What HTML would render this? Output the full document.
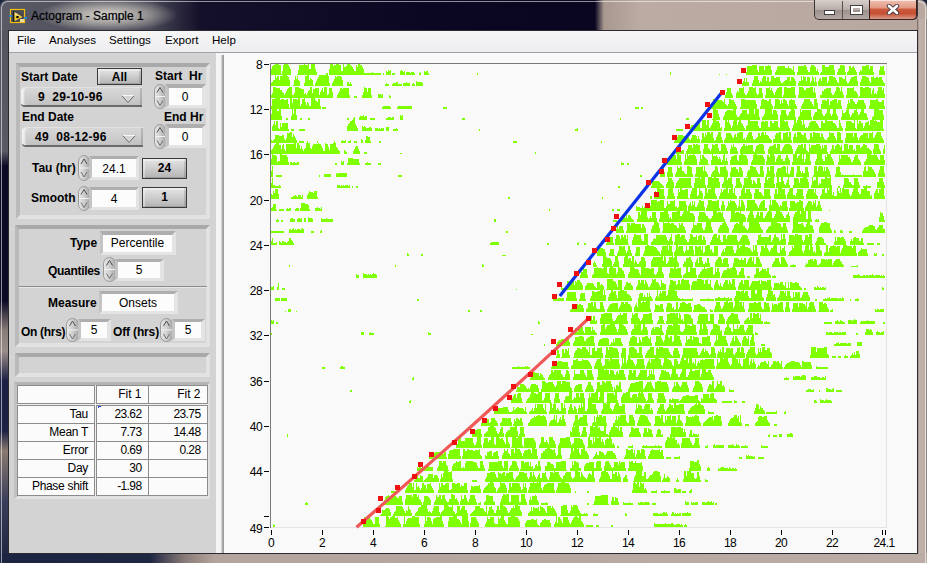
<!DOCTYPE html><html><head><meta charset="utf-8"><style>
*{margin:0;padding:0}
html,body{width:927px;height:563px;overflow:hidden;background:#1b2440}
body{position:relative;font-family:"Liberation Sans",sans-serif}
.t{position:absolute;white-space:pre;line-height:1;}
</style></head><body>
<div style="position:absolute;left:0px;top:0px;width:927px;height:563px;background:#1b2440;border-radius:7px 7px 0 0;"></div>
<div style="position:absolute;left:0px;top:0px;width:927px;height:31px;border-radius:7px 7px 0 0;background:linear-gradient(90deg,#5a5a66 0px,#4a4a58 150px,#14102a 200px,#0b0722 430px,#0a0620 595px,#a89890 604px,#bcaba3 640px,#b8a8a0 927px);"></div>
<div style="position:absolute;left:20px;top:0px;width:160px;height:31px;background:radial-gradient(ellipse 70px 17px at 88px 15px,rgba(235,230,220,0.92),rgba(210,205,195,0.55) 55%,rgba(120,118,125,0) 100%);"></div>
<div style="position:absolute;left:0px;top:31px;width:9px;height:532px;background:linear-gradient(180deg,#55555f 0px,#5a5a66 120px,#0c0a26 135px,#0c0a26 270px,#8a7c78 300px,#9a8c88 320px,#1c1f45 350px,#1c2145 400px,#8a7a70 420px,#3a3d5a 470px,#1b2440 532px);"></div>
<div style="position:absolute;left:917px;top:19px;width:10px;height:544px;background:linear-gradient(90deg,#6a5e5a 0px,#c2b2ac 2px,#bcaca6 8px,#e0d8d4 9px,#3a3030 10px);"></div>
<div style="position:absolute;left:0px;top:553px;width:927px;height:10px;background:linear-gradient(90deg,#1b2440 0px,#1e2642 150px,#8a7c78 185px,#b4a49e 215px,#bcaca6 927px);"></div>
<div style="position:absolute;left:1px;top:1px;width:925px;height:562px;border:1px solid rgba(255,255,255,0.55);border-bottom:none;border-radius:7px 7px 0 0;box-sizing:border-box;"></div>
<svg style="position:absolute;left:9px;top:8px" width="18" height="17" viewBox="0 0 18 17"><rect x="1.5" y="1.5" width="14" height="13" fill="#4a4850" stroke="#f2c010" stroke-width="1.2"/><rect x="4" y="3" width="1.2" height="11" fill="#202020"/><path d="M5.5 4 L13.5 9 L5.5 13 Z" fill="#f4cc30"/><path d="M6 5 L11 8 L6 7 Z" fill="#fff0b0"/><circle cx="8.5" cy="9" r="1.3" fill="#000"/><rect x="11" y="11" width="4" height="3" fill="#e8dca0"/><rect x="0" y="7" width="3" height="2" fill="#3080d0"/><rect x="15" y="9" width="3" height="2" fill="#3080d0"/></svg>
<div class="t" style="left:31px;top:9.5px;font-size:12px;font-weight:normal;color:#000;text-shadow:0 0 1px rgba(0,0,40,0.5);">Actogram - Sample 1</div>
<div style="position:absolute;left:814px;top:0px;width:104px;height:20px;border:1px solid #3a3434;border-top:none;border-radius:0 0 5px 5px;box-sizing:border-box;background:linear-gradient(180deg,#d8d0cc 0%,#b8aca8 50%,#9c908c 51%,#b4a8a4 100%);"></div>
<div style="position:absolute;left:869px;top:0px;width:48px;height:20px;border:1px solid #3a2020;border-top:none;border-radius:0 0 5px 0;box-sizing:border-box;background:linear-gradient(180deg,#f0c0b0 0%,#e49a86 40%,#cc5a3e 50%,#c44e32 70%,#dc9a88 100%);box-shadow:inset 0 1px 0 rgba(255,255,255,0.6);"></div>
<div style="position:absolute;left:842px;top:1px;width:1px;height:18px;background:#5a5050;"></div>
<div style="position:absolute;left:824px;top:10px;width:11px;height:5px;background:#fff;border:1px solid #404040;box-sizing:border-box;"></div>
<div style="position:absolute;left:851px;top:6px;width:11px;height:8px;border:2px solid #fff;outline:1px solid #404040;box-sizing:border-box;"></div>
<svg style="position:absolute;left:886px;top:4px" width="14" height="11" viewBox="0 0 14 11"><path d="M3 2 L11 9 M11 2 L3 9" stroke="#4a4048" stroke-width="4.4" stroke-linecap="round"/><path d="M3 2 L11 9 M11 2 L3 9" stroke="#fff" stroke-width="2.6" stroke-linecap="round"/></svg>
<div style="position:absolute;left:8px;top:30px;width:910px;height:524px;background:#f0f0f0;border:1px solid #2a2a30;box-sizing:border-box;"></div>
<div style="position:absolute;left:9px;top:31px;width:908px;height:21px;background:linear-gradient(180deg,#f6f6f6,#eeeef2);"></div>
<div style="position:absolute;left:9px;top:52px;width:908px;height:1px;background:#a0a0a8;"></div>
<div class="t" style="left:17px;top:34px;font-size:11.6px;font-weight:normal;color:#000;">File</div>
<div class="t" style="left:49px;top:34px;font-size:11.6px;font-weight:normal;color:#000;">Analyses</div>
<div class="t" style="left:109px;top:34px;font-size:11.6px;font-weight:normal;color:#000;">Settings</div>
<div class="t" style="left:165px;top:34px;font-size:11.6px;font-weight:normal;color:#000;">Export</div>
<div class="t" style="left:212px;top:34px;font-size:11.6px;font-weight:normal;color:#000;">Help</div>
<div style="position:absolute;left:9px;top:53px;width:207px;height:500px;background:#d3d3d3;"></div>
<div style="position:absolute;left:216px;top:53px;width:701px;height:500px;background:#f4f4f4;"></div>
<div style="position:absolute;left:221px;top:55px;width:3px;height:498px;background:linear-gradient(90deg,#e0e0e0,#a8a8a8 60%,#909090);"></div>
<div style="position:absolute;left:224px;top:53px;width:693px;height:500px;background:#f9f9f9;"></div>
<div style="position:absolute;left:16px;top:63px;width:194px;height:156px;box-sizing:border-box;border-style:solid;border-width:4px 4px 4px 4px;border-color:#a9a9a9 #e2e2e2 #e2e2e2 #bababa;background:#d3d3d3;"></div>
<div class="t" style="left:21px;top:71px;font-size:12px;font-weight:bold;color:#000;">Start Date</div>
<div style="position:absolute;left:97px;top:68px;width:45px;height:17px;box-sizing:border-box;border:1px solid #3a3a3a;background:linear-gradient(180deg,#e4e4e4 0%,#d2d2d2 40%,#c0c0c0 75%,#b2b2b2 100%);box-shadow:inset 2px 2px 0 rgba(255,255,255,0.35),inset -2px -1px 0 rgba(0,0,0,0.12);"></div><div class="t" style="left:19.5px;width:200px;top:71px;font-size:12px;font-weight:bold;color:#000;text-align:center;">All</div>
<div style="position:absolute;left:21px;top:87px;width:121px;height:20px;box-sizing:border-box;border-bottom:2px solid #6a6a6a;border-top:1px solid #e2e2e2;border-radius:4px 0 0 4px;background:linear-gradient(180deg,#d8d8d8 0%,#cccccc 60%,#c2c2c2 100%);box-shadow:inset 4px 0 2px -1px rgba(255,255,255,0.7),inset -2px 0 1px rgba(0,0,0,0.15);"></div><div class="t" style="left:38px;top:91px;font-size:12px;font-weight:bold;color:#000;letter-spacing:0.3px;">9  29-10-96</div><svg style="position:absolute;left:120px;top:94px" width="16" height="10" viewBox="0 0 16 10"><path d="M1.5 1.5 L14.5 1.5 L8 8.5 Z" fill="#d6d6d6" stroke="#6a6a6a" stroke-width="1"/><path d="M1.5 1.5 L14.5 1.5" stroke="#f6f6f6" stroke-width="1"/></svg>
<div class="t" style="left:155px;top:70px;font-size:12px;font-weight:bold;color:#000;">Start  Hr</div>
<svg style="position:absolute;left:154px;top:84px" width="12" height="25" viewBox="0 0 12 25"><defs><linearGradient id="sg" x1="0" y1="0" x2="1" y2="0"><stop offset="0" stop-color="#e8e8e8"/><stop offset="0.5" stop-color="#cfcfcf"/><stop offset="1" stop-color="#a8a8a8"/></linearGradient></defs><rect x="0.5" y="0.5" width="11" height="24" rx="5.5" ry="6.25" fill="url(#sg)" stroke="#9a9a9a" stroke-width="1"/><line x1="1" y1="12.5" x2="11" y2="12.5" stroke="#f4f4f4" stroke-width="1"/><path d="M3.0 8.5 L6.0 3.5 L9.0 8.5" fill="none" stroke="#505050" stroke-width="1"/><path d="M3.0 16.5 L6.0 21.5 L9.0 16.5" fill="none" stroke="#707070" stroke-width="1"/></svg>
<div style="position:absolute;left:165px;top:84px;width:41px;height:24px;box-sizing:border-box;border-style:solid;border-width:4px 4px 3px 4px;border-color:#aeaeae #e4e4e4 #e4e4e4 #c4c4c4;background:#fcfcfc;"></div>
<div class="t" style="left:85px;width:200px;top:91px;font-size:12px;font-weight:normal;color:#000;text-align:center;">0</div>
<div class="t" style="left:22px;top:111px;font-size:12px;font-weight:bold;color:#000;">End Date</div>
<div style="position:absolute;left:22px;top:127px;width:121px;height:20px;box-sizing:border-box;border-bottom:2px solid #6a6a6a;border-top:1px solid #e2e2e2;border-radius:4px 0 0 4px;background:linear-gradient(180deg,#d8d8d8 0%,#cccccc 60%,#c2c2c2 100%);box-shadow:inset 4px 0 2px -1px rgba(255,255,255,0.7),inset -2px 0 1px rgba(0,0,0,0.15);"></div><div class="t" style="left:35px;top:131px;font-size:12px;font-weight:bold;color:#000;letter-spacing:0.3px;">49  08-12-96</div><svg style="position:absolute;left:121px;top:134px" width="16" height="10" viewBox="0 0 16 10"><path d="M1.5 1.5 L14.5 1.5 L8 8.5 Z" fill="#d6d6d6" stroke="#6a6a6a" stroke-width="1"/><path d="M1.5 1.5 L14.5 1.5" stroke="#f6f6f6" stroke-width="1"/></svg>
<div class="t" style="left:164px;top:111px;font-size:12px;font-weight:bold;color:#000;">End Hr</div>
<svg style="position:absolute;left:154px;top:124px" width="12" height="25" viewBox="0 0 12 25"><defs><linearGradient id="sg" x1="0" y1="0" x2="1" y2="0"><stop offset="0" stop-color="#e8e8e8"/><stop offset="0.5" stop-color="#cfcfcf"/><stop offset="1" stop-color="#a8a8a8"/></linearGradient></defs><rect x="0.5" y="0.5" width="11" height="24" rx="5.5" ry="6.25" fill="url(#sg)" stroke="#9a9a9a" stroke-width="1"/><line x1="1" y1="12.5" x2="11" y2="12.5" stroke="#f4f4f4" stroke-width="1"/><path d="M3.0 8.5 L6.0 3.5 L9.0 8.5" fill="none" stroke="#505050" stroke-width="1"/><path d="M3.0 16.5 L6.0 21.5 L9.0 16.5" fill="none" stroke="#707070" stroke-width="1"/></svg>
<div style="position:absolute;left:165px;top:124px;width:41px;height:24px;box-sizing:border-box;border-style:solid;border-width:4px 4px 3px 4px;border-color:#aeaeae #e4e4e4 #e4e4e4 #c4c4c4;background:#fcfcfc;"></div>
<div class="t" style="left:85px;width:200px;top:131px;font-size:12px;font-weight:normal;color:#000;text-align:center;">0</div>
<div class="t" style="left:32px;top:162px;font-size:12px;font-weight:bold;color:#000;">Tau (hr)</div>
<svg style="position:absolute;left:78px;top:155px" width="12" height="26" viewBox="0 0 12 26"><defs><linearGradient id="sg" x1="0" y1="0" x2="1" y2="0"><stop offset="0" stop-color="#e8e8e8"/><stop offset="0.5" stop-color="#cfcfcf"/><stop offset="1" stop-color="#a8a8a8"/></linearGradient></defs><rect x="0.5" y="0.5" width="11" height="25" rx="5.5" ry="6.5" fill="url(#sg)" stroke="#9a9a9a" stroke-width="1"/><line x1="1" y1="13.0" x2="11" y2="13.0" stroke="#f4f4f4" stroke-width="1"/><path d="M3.0 9.0 L6.0 4.0 L9.0 9.0" fill="none" stroke="#505050" stroke-width="1"/><path d="M3.0 17.0 L6.0 22.0 L9.0 17.0" fill="none" stroke="#707070" stroke-width="1"/></svg>
<div style="position:absolute;left:89px;top:156px;width:50px;height:24px;box-sizing:border-box;border-style:solid;border-width:3px 3px 3px 3px;border-color:#aeaeae #e4e4e4 #e4e4e4 #c4c4c4;background:#fcfcfc;"></div>
<div class="t" style="left:14px;width:200px;top:163px;font-size:12px;font-weight:normal;color:#000;text-align:center;">24.1</div>
<div style="position:absolute;left:142px;top:158px;width:45px;height:21px;box-sizing:border-box;border:1px solid #3a3a3a;background:linear-gradient(180deg,#e4e4e4 0%,#d2d2d2 40%,#c0c0c0 75%,#b2b2b2 100%);box-shadow:inset 2px 2px 0 rgba(255,255,255,0.35),inset -2px -1px 0 rgba(0,0,0,0.12);"></div><div class="t" style="left:64.5px;width:200px;top:162px;font-size:12px;font-weight:bold;color:#000;text-align:center;">24</div>
<div class="t" style="left:31px;top:192px;font-size:12px;font-weight:bold;color:#000;">Smooth</div>
<svg style="position:absolute;left:78px;top:186px" width="12" height="25" viewBox="0 0 12 25"><defs><linearGradient id="sg" x1="0" y1="0" x2="1" y2="0"><stop offset="0" stop-color="#e8e8e8"/><stop offset="0.5" stop-color="#cfcfcf"/><stop offset="1" stop-color="#a8a8a8"/></linearGradient></defs><rect x="0.5" y="0.5" width="11" height="24" rx="5.5" ry="6.25" fill="url(#sg)" stroke="#9a9a9a" stroke-width="1"/><line x1="1" y1="12.5" x2="11" y2="12.5" stroke="#f4f4f4" stroke-width="1"/><path d="M3.0 8.5 L6.0 3.5 L9.0 8.5" fill="none" stroke="#505050" stroke-width="1"/><path d="M3.0 16.5 L6.0 21.5 L9.0 16.5" fill="none" stroke="#707070" stroke-width="1"/></svg>
<div style="position:absolute;left:89px;top:187px;width:50px;height:23px;box-sizing:border-box;border-style:solid;border-width:3px 3px 3px 3px;border-color:#aeaeae #e4e4e4 #e4e4e4 #c4c4c4;background:#fcfcfc;"></div>
<div class="t" style="left:14px;width:200px;top:193px;font-size:12px;font-weight:normal;color:#000;text-align:center;">4</div>
<div style="position:absolute;left:142px;top:187px;width:45px;height:21px;box-sizing:border-box;border:1px solid #3a3a3a;background:linear-gradient(180deg,#e4e4e4 0%,#d2d2d2 40%,#c0c0c0 75%,#b2b2b2 100%);box-shadow:inset 2px 2px 0 rgba(255,255,255,0.35),inset -2px -1px 0 rgba(0,0,0,0.12);"></div><div class="t" style="left:64.5px;width:200px;top:191px;font-size:12px;font-weight:bold;color:#000;text-align:center;">1</div>
<div style="position:absolute;left:15px;top:225px;width:195px;height:122px;box-sizing:border-box;border-style:solid;border-width:4px 4px 4px 4px;border-color:#a9a9a9 #e2e2e2 #e2e2e2 #bababa;background:#d3d3d3;"></div>
<div class="t" style="left:70px;top:237px;font-size:12px;font-weight:bold;color:#000;">Type</div>
<div style="position:absolute;left:100px;top:231px;width:76px;height:24px;box-sizing:border-box;border-style:solid;border-width:4px 4px 3px 3px;border-color:#aeaeae #e4e4e4 #e4e4e4 #c4c4c4;background:#fcfcfc;"></div>
<div class="t" style="left:37.5px;width:200px;top:237px;font-size:12px;font-weight:normal;color:#000;text-align:center;">Percentile</div>
<div class="t" style="left:48px;top:265px;font-size:12px;font-weight:bold;color:#000;letter-spacing:-0.3px;">Quantiles</div>
<svg style="position:absolute;left:103px;top:257px" width="13" height="25" viewBox="0 0 13 25"><defs><linearGradient id="sg" x1="0" y1="0" x2="1" y2="0"><stop offset="0" stop-color="#e8e8e8"/><stop offset="0.5" stop-color="#cfcfcf"/><stop offset="1" stop-color="#a8a8a8"/></linearGradient></defs><rect x="0.5" y="0.5" width="12" height="24" rx="6.0" ry="6.25" fill="url(#sg)" stroke="#9a9a9a" stroke-width="1"/><line x1="1" y1="12.5" x2="12" y2="12.5" stroke="#f4f4f4" stroke-width="1"/><path d="M3.5 8.5 L6.5 3.5 L9.5 8.5" fill="none" stroke="#505050" stroke-width="1"/><path d="M3.5 16.5 L6.5 21.5 L9.5 16.5" fill="none" stroke="#707070" stroke-width="1"/></svg>
<div style="position:absolute;left:115px;top:259px;width:49px;height:22px;box-sizing:border-box;border-style:solid;border-width:3px 4px 3px 3px;border-color:#aeaeae #e4e4e4 #e4e4e4 #c4c4c4;background:#fcfcfc;"></div>
<div class="t" style="left:39px;width:200px;top:264px;font-size:12px;font-weight:normal;color:#000;text-align:center;">5</div>
<div style="position:absolute;left:19px;top:286px;width:188px;height:1px;background:#8a8a8a;"></div>
<div style="position:absolute;left:19px;top:287px;width:188px;height:1px;background:#e8e8e8;"></div>
<div class="t" style="left:48px;top:297px;font-size:12px;font-weight:bold;color:#000;">Measure</div>
<div style="position:absolute;left:99px;top:291px;width:79px;height:23px;box-sizing:border-box;border-style:solid;border-width:3px 4px 3px 3px;border-color:#aeaeae #e4e4e4 #e4e4e4 #c4c4c4;background:#fcfcfc;"></div>
<div class="t" style="left:38px;width:200px;top:297px;font-size:12px;font-weight:normal;color:#000;text-align:center;">Onsets</div>
<div class="t" style="left:21px;top:326px;font-size:12px;font-weight:bold;color:#000;letter-spacing:-0.3px;">On (hrs)</div>
<svg style="position:absolute;left:66px;top:318px" width="13" height="24" viewBox="0 0 13 24"><defs><linearGradient id="sg" x1="0" y1="0" x2="1" y2="0"><stop offset="0" stop-color="#e8e8e8"/><stop offset="0.5" stop-color="#cfcfcf"/><stop offset="1" stop-color="#a8a8a8"/></linearGradient></defs><rect x="0.5" y="0.5" width="12" height="23" rx="6.0" ry="6.0" fill="url(#sg)" stroke="#9a9a9a" stroke-width="1"/><line x1="1" y1="12.0" x2="12" y2="12.0" stroke="#f4f4f4" stroke-width="1"/><path d="M3.5 8.0 L6.5 3.0 L9.5 8.0" fill="none" stroke="#505050" stroke-width="1"/><path d="M3.5 16.0 L6.5 21.0 L9.5 16.0" fill="none" stroke="#707070" stroke-width="1"/></svg>
<div style="position:absolute;left:78px;top:319px;width:33px;height:22px;box-sizing:border-box;border-style:solid;border-width:3px 4px 3px 3px;border-color:#aeaeae #e4e4e4 #e4e4e4 #c4c4c4;background:#fcfcfc;"></div>
<div class="t" style="left:-6px;width:200px;top:324px;font-size:12px;font-weight:normal;color:#000;text-align:center;">5</div>
<div class="t" style="left:113px;top:326px;font-size:12px;font-weight:bold;color:#000;letter-spacing:-0.15px;">Off (hrs)</div>
<svg style="position:absolute;left:160px;top:318px" width="13" height="24" viewBox="0 0 13 24"><defs><linearGradient id="sg" x1="0" y1="0" x2="1" y2="0"><stop offset="0" stop-color="#e8e8e8"/><stop offset="0.5" stop-color="#cfcfcf"/><stop offset="1" stop-color="#a8a8a8"/></linearGradient></defs><rect x="0.5" y="0.5" width="12" height="23" rx="6.0" ry="6.0" fill="url(#sg)" stroke="#9a9a9a" stroke-width="1"/><line x1="1" y1="12.0" x2="12" y2="12.0" stroke="#f4f4f4" stroke-width="1"/><path d="M3.5 8.0 L6.5 3.0 L9.5 8.0" fill="none" stroke="#505050" stroke-width="1"/><path d="M3.5 16.0 L6.5 21.0 L9.5 16.0" fill="none" stroke="#707070" stroke-width="1"/></svg>
<div style="position:absolute;left:172px;top:319px;width:33px;height:22px;box-sizing:border-box;border-style:solid;border-width:3px 4px 3px 3px;border-color:#aeaeae #e4e4e4 #e4e4e4 #c4c4c4;background:#fcfcfc;"></div>
<div class="t" style="left:88px;width:200px;top:324px;font-size:12px;font-weight:normal;color:#000;text-align:center;">5</div>
<div style="position:absolute;left:15px;top:353px;width:195px;height:24px;box-sizing:border-box;border-style:solid;border-width:4px 4px 4px 4px;border-color:#a9a9a9 #e2e2e2 #e2e2e2 #bababa;background:#d3d3d3;"></div>
<div style="position:absolute;left:14px;top:382px;width:196px;height:117px;box-sizing:border-box;border-style:solid;border-width:4px 3px 3px 4px;border-color:#b4b4b4 #e2e2e2 #e2e2e2 #c2c2c2;background:#d3d3d3;"></div>
<svg style="position:absolute;left:0;top:0" width="927" height="563" viewBox="0 0 927 563" shape-rendering="crispEdges">
<rect x="17" y="385" width="191" height="111" fill="#8c8c8c"/>
<rect x="18" y="386" width="76" height="17" fill="#fbfbfb"/>
<rect x="18" y="406" width="76" height="17" fill="#fbfbfb"/>
<rect x="18" y="424" width="76" height="17" fill="#fbfbfb"/>
<rect x="18" y="442" width="76" height="17" fill="#fbfbfb"/>
<rect x="18" y="460" width="76" height="17" fill="#fbfbfb"/>
<rect x="18" y="478" width="76" height="17" fill="#fbfbfb"/>
<rect x="97" y="386" width="51" height="17" fill="#fbfbfb"/>
<rect x="97" y="406" width="51" height="17" fill="#fbfbfb"/>
<rect x="97" y="424" width="51" height="17" fill="#fbfbfb"/>
<rect x="97" y="442" width="51" height="17" fill="#fbfbfb"/>
<rect x="97" y="460" width="51" height="17" fill="#fbfbfb"/>
<rect x="97" y="478" width="51" height="17" fill="#fbfbfb"/>
<rect x="149" y="386" width="58" height="17" fill="#fbfbfb"/>
<rect x="149" y="406" width="58" height="17" fill="#fbfbfb"/>
<rect x="149" y="424" width="58" height="17" fill="#fbfbfb"/>
<rect x="149" y="442" width="58" height="17" fill="#fbfbfb"/>
<rect x="149" y="460" width="58" height="17" fill="#fbfbfb"/>
<rect x="149" y="478" width="58" height="17" fill="#fbfbfb"/>
<rect x="94" y="385" width="3" height="111" fill="#8c8c8c"/><rect x="95" y="385" width="1" height="111" fill="#f0f0f0"/>
<rect x="17" y="404" width="191" height="1" fill="#f0f0f0"/>
<path d="M98 408 V406 H101" stroke="#2040e0" stroke-width="1" fill="none"/>
</svg>
<div class="t" style="right:785.5px;top:388px;font-size:12px;font-weight:normal;color:#000;text-align:right;">Fit 1</div>
<div class="t" style="right:726.5px;top:388px;font-size:12px;font-weight:normal;color:#000;text-align:right;">Fit 2</div>
<div class="t" style="right:839px;top:408px;font-size:12px;font-weight:normal;color:#000;text-align:right;letter-spacing:-0.3px;">Tau</div>
<div class="t" style="right:785.5px;top:408px;font-size:12px;font-weight:normal;color:#000;text-align:right;letter-spacing:-0.6px;">23.62</div>
<div class="t" style="right:726.5px;top:408px;font-size:12px;font-weight:normal;color:#000;text-align:right;letter-spacing:-0.6px;">23.75</div>
<div class="t" style="right:839px;top:426px;font-size:12px;font-weight:normal;color:#000;text-align:right;letter-spacing:-0.3px;">Mean T</div>
<div class="t" style="right:785.5px;top:426px;font-size:12px;font-weight:normal;color:#000;text-align:right;letter-spacing:-0.6px;">7.73</div>
<div class="t" style="right:726.5px;top:426px;font-size:12px;font-weight:normal;color:#000;text-align:right;letter-spacing:-0.6px;">14.48</div>
<div class="t" style="right:839px;top:444px;font-size:12px;font-weight:normal;color:#000;text-align:right;letter-spacing:-0.3px;">Error</div>
<div class="t" style="right:785.5px;top:444px;font-size:12px;font-weight:normal;color:#000;text-align:right;letter-spacing:-0.6px;">0.69</div>
<div class="t" style="right:726.5px;top:444px;font-size:12px;font-weight:normal;color:#000;text-align:right;letter-spacing:-0.6px;">0.28</div>
<div class="t" style="right:839px;top:462px;font-size:12px;font-weight:normal;color:#000;text-align:right;letter-spacing:-0.3px;">Day</div>
<div class="t" style="right:785.5px;top:462px;font-size:12px;font-weight:normal;color:#000;text-align:right;letter-spacing:-0.6px;">30</div>
<div class="t" style="right:839px;top:480px;font-size:12px;font-weight:normal;color:#000;text-align:right;letter-spacing:-0.3px;">Phase shift</div>
<div class="t" style="right:785.5px;top:480px;font-size:12px;font-weight:normal;color:#000;text-align:right;letter-spacing:-0.6px;">-1.98</div>
<svg style="position:absolute;left:0;top:0" width="927" height="563" viewBox="0 0 927 563" shape-rendering="crispEdges">
<rect x="270.5" y="63.5" width="616" height="464" fill="none" stroke="#e4e4e4" stroke-width="1"/>
<path d="M270.5 63 V528 M270 63.5 H887" stroke="#7a7a7a" stroke-width="1" fill="none"/>
<path d="M271 75V69H272V66H273V65H275V64H279V65H281V74H282V71H283V65H284V64H288V65H289V67H290V69H291V75ZM297 75V74H298V70H299V65H304V64H305V65H308V64H309V69H311V64H315V69H316V72H317V75ZM326 75V73H328V75ZM329 75V69H330V64H333V66H334V65H336V64H339V65H341V71H343V64H344V67H346V66H347V64H350V65H351V66H352V67H353V69H354V71H356V65H357V67H358V64H360V65H362V67H363V69H364V73H372V72H373V73H381V75ZM383 75V73H384V75ZM386 75V71H387V72H388V70H389V71H390V70H391V75ZM392 75V73H395V75ZM400 75V71H401V70H402V71H403V72H404V71H405V75ZM406 75V72H410V73H411V72H414V73H415V75ZM419 75V73H420V72H421V75ZM424 75V71H425V72H426V71H428V73H429V75ZM477 75V73H478V75ZM670 75V72H671V75ZM719 75V74H720V75ZM726 75V74H727V75ZM746 75V72H747V66H752V65H757V70H758V72H759V66H764V70H765V66H768V65H769V66H771V70H772V75ZM775 75V72H776V70H777V67H778V66H785V68H788V66H789V68H791V69H792V70H793V66H794V72H795V75ZM797 75V72H798V66H804V65H806V67H807V70H808V72H810V67H811V65H814V66H815V67H816V71H817V69H818V72H819V75ZM820 75V73H821V72H822V65H825V67H829V65H834V70H835V75ZM837 75V72H838V69H839V68H840V65H844V66H845V72H846V75ZM847 75V72H848V71H849V66H851V68H852V67H853V66H854V68H855V70H856V72H857V75ZM859 75V72H860V70H861V71H862V66H866V65H869V69H870V66H873V72H874V75ZM879 75V70H880V66H881V67H882V66H884V71H885V75ZM271 86V83H272V82H273V80H275V75H276V78H277V76H279V80H280V76H283V75H287V76H288V77H289V80H290V86ZM293 86V85H294V80H295V76H296V79H297V76H298V80H299V81H300V86ZM304 86V83H305V76H307V75H309V80H310V78H311V79H312V80H313V85H314V86ZM315 86V83H316V81H317V79H318V77H319V75H328V76H329V83H330V86ZM332 86V83H333V81H334V79H335V76H336V77H337V76H341V77H342V80H343V86ZM347 86V82H349V84H350V82H351V84H352V86ZM385 86V84H386V83H387V84H389V86ZM392 86V84H393V83H396V82H398V84H402V86ZM403 86V83H406V82H407V83H410V86ZM412 86V84H413V83H414V84H415V86ZM416 86V81H417V82H422V83H423V86ZM742 86V83H743V81H744V78H745V82H746V78H747V82H749V86ZM752 86V83H753V80H754V76H758V80H759V83H760V81H761V82H762V78H763V76H766V81H767V77H769V82H770V81H771V76H774V78H776V77H780V81H781V83H783V82H784V81H785V80H787V77H790V81H791V77H794V79H795V81H796V86ZM798 86V83H799V81H801V76H802V80H803V76H804V77H806V81H807V77H810V83H811V81H812V76H813V78H814V82H815V77H816V82H817V86ZM818 86V81H819V79H820V78H821V81H822V77H827V83H828V81H829V76H833V77H835V78H836V80H837V82H838V83H839V77H842V78H843V79H845V76H846V81H847V83H849V81H850V79H851V77H854V76H857V81H858V86ZM860 86V82H861V79H862V76H866V77H868V78H869V81H870V83H871V77H873V76H874V78H876V77H878V78H879V77H882V80H883V82H884V83H885V86ZM271 98V95H272V93H273V87H276V88H280V90H282V92H283V93H284V95H285V93H286V91H287V89H288V88H289V87H292V95H294V93H295V87H299V88H301V89H304V94H305V93H306V95H307V93H308V91H309V90H310V87H312V93H313V89H315V88H319V95H320V92H321V90H322V88H323V92H324V87H327V95H328V94H329V88H332V92H333V98ZM337 98V95H338V93H339V91H340V88H342V89H343V88H349V95H350V98ZM354 98V96H357V98ZM362 98V95H363V92H364V87H365V88H367V92H368V88H371V95H372V98ZM378 98V94H381V95H382V94H383V98ZM389 98V95H390V96H391V98ZM725 98V95H726V92H727V88H731V93H732V95H733V98ZM736 98V93H737V91H738V92H739V88H743V87H744V93H745V95H747V93H748V91H749V87H753V88H755V87H756V93H757V95H758V94H759V88H762V93H763V98ZM765 98V95H766V88H769V87H770V90H771V88H772V91H773V93H774V95H775V92H776V90H777V88H779V87H782V97H783V95H784V87H787V88H791V87H795V95H796V98ZM798 98V95H799V87H803V88H804V90H806V88H810V87H813V92H814V88H815V93H816V98ZM820 98V95H822V91H824V89H826V88H831V93H832V95H834V93H835V91H836V87H839V88H840V91H841V87H842V92H843V95H844V98ZM846 98V95H847V88H853V87H854V91H856V92H857V94H858V97H859V96H860V87H863V88H865V87H869V88H871V94H872V90H873V88H874V94H875V93H876V94H877V91H878V87H882V90H883V88H884V94H885V98ZM271 109V106H272V99H275V98H280V100H281V99H284V100H286V99H288V104H289V108H290V98H292V103H293V99H297V100H298V98H300V106H301V104H302V99H304V98H305V102H306V105H307V102H308V103H309V106H311V98H315V100H316V101H317V102H318V99H320V106H321V109ZM322 109V107H326V109ZM382 109V107H383V106H390V107H391V109ZM397 109V107H398V106H412V109ZM443 109V107H447V109ZM635 109V107H639V109ZM641 109V107H643V109ZM710 109V106H711V105H712V104H713V99H717V100H722V101H723V102H724V99H725V104H726V105H727V106H728V104H729V99H731V100H734V102H735V104H736V106H737V109ZM740 109V107H741V99H745V100H755V101H756V104H757V109ZM760 109V106H761V100H762V99H764V100H767V101H769V99H771V104H772V106H773V109ZM774 109V106H775V99H779V100H780V104H781V100H782V103H783V99H785V100H786V101H787V104H788V106H789V100H791V99H792V100H795V104H796V106H797V109ZM801 109V106H802V104H803V102H804V99H810V101H811V102H812V104H813V106H814V99H817V103H818V109ZM821 109V104H822V100H826V101H827V99H829V105H830V101H832V100H834V99H837V103H838V100H841V106H842V109ZM846 109V108H847V104H848V100H849V103H850V99H853V101H854V102H855V104H857V102H858V100H864V103H865V105H866V109ZM869 109V106H870V100H876V99H878V101H879V102H882V100H884V106H885V109ZM271 120V114H272V109H277V111H279V109H281V116H282V120ZM286 120V118H288V120ZM291 120V116H292V109H293V114H294V109H296V115H297V120ZM300 120V118H302V120ZM308 120V118H310V120ZM347 120V118H349V120ZM353 120V118H354V117H355V120ZM359 120V117H360V116H363V115H364V117H365V116H367V120ZM370 120V118H375V120ZM386 120V118H388V117H391V118H392V117H394V120ZM400 120V115H401V116H402V115H403V120ZM462 120V118H465V120ZM620 120V118H621V120ZM686 120V118H689V120ZM712 120V119H713V109H716V110H718V114H719V117H720V120ZM723 120V117H724V115H725V112H726V111H727V110H732V111H733V109H736V115H737V117H739V116H740V114H741V113H742V110H747V114H749V109H754V114H755V109H759V117H760V120ZM762 120V117H763V116H764V114H765V109H772V114H773V110H776V111H777V114H778V120ZM780 120V115H781V110H786V114H787V116H788V115H789V112H790V111H791V109H794V110H795V117H796V120ZM798 120V117H799V116H800V109H801V112H802V110H811V117H812V120ZM813 120V116H814V114H815V112H817V109H821V110H822V114H823V116H825V114H826V113H827V109H830V114H831V116H832V114H833V109H836V114H837V116H838V120ZM841 120V117H842V110H843V113H845V112H846V110H847V109H849V114H850V117H851V115H852V113H854V110H856V109H857V112H858V115H859V114H860V112H861V109H864V113H866V114H867V117H868V120ZM872 120V117H873V116H874V109H879V110H883V115H884V120ZM272 131V126H273V124H274V121H275V125H276V121H278V128H279V129H280V123H281V127H282V123H288V129H289V131ZM291 131V129H294V131ZM299 131V129H305V131ZM347 131V126H348V124H349V123H350V121H352V120H355V124H356V126H357V128H358V131ZM362 131V126H363V127H364V126H365V127H366V128H369V127H371V128H372V131ZM375 131V128H378V129H379V128H380V129H381V128H384V131ZM386 131V127H389V131ZM393 131V129H396V128H397V129H398V131ZM479 131V129H480V131ZM575 131V129H577V128H578V131ZM676 131V129H683V131ZM690 131V127H691V125H694V124H695V123H700V128H702V120H706V125H707V120H709V128H710V127H711V125H712V123H713V120H716V121H719V123H720V128H721V127H722V131ZM724 131V128H725V120H727V122H728V120H729V123H730V125H731V128H732V126H733V121H734V120H737V125H738V122H739V120H741V123H742V124H743V126H744V128H745V130H746V126H747V125H748V120H750V121H758V126H759V128H761V122H762V121H764V122H765V121H768V127H770V121H772V123H774V121H778V127H779V128H780V120H784V121H785V122H786V121H788V126H789V128H790V131ZM792 131V128H793V125H794V120H796V123H797V120H801V121H802V125H803V120H804V124H805V128H806V127H807V128H808V126H809V123H810V122H811V121H816V123H817V124H818V126H819V128H821V121H823V123H825V120H827V121H833V123H835V124H836V126H837V128H839V120H840V123H841V126H842V128H843V131ZM845 131V128H846V121H851V122H852V123H854V120H855V128H856V129H857V120H858V124H859V121H861V123H863V128H864V126H865V123H866V122H868V121H869V125H870V120H874V121H875V120H876V121H877V122H880V120H883V129H884V131ZM271 143V140H272V141H273V140H274V139H275V135H279V136H282V135H284V139H285V140H286V138H287V133H290V132H292V137H293V134H294V136H295V138H296V140H297V143ZM299 143V141H304V143ZM307 143V141H308V143ZM317 143V141H318V143ZM334 143V141H335V143ZM341 143V141H342V140H343V141H345V140H346V143ZM348 143V141H350V140H351V143ZM354 143V141H357V143ZM361 143V139H362V140H363V143ZM365 143V140H366V136H368V137H370V141H371V143ZM379 143V141H381V143ZM513 143V141H517V143ZM601 143V141H602V143ZM674 143V141H675V139H676V138H677V137H678V135H683V136H688V137H689V139H690V140H691V138H692V135H696V136H697V139H698V136H699V139H700V143ZM701 143V140H702V133H704V137H705V133H706V135H707V132H710V134H711V132H713V138H714V141H715V140H716V137H717V135H718V132H721V137H722V140H723V143ZM724 143V140H725V138H726V133H731V135H732V137H733V138H734V135H735V134H736V137H737V133H739V132H743V139H744V138H745V140H746V137H747V135H748V133H749V132H752V136H753V139H754V140H755V139H756V138H757V137H758V133H760V136H761V133H762V132H764V135H765V132H766V135H768V136H769V138H770V139H771V140H772V143ZM773 143V139H775V135H776V133H779V132H781V139H782V140H783V133H786V132H788V137H789V132H791V140H792V143ZM793 143V137H794V134H795V133H796V137H797V132H801V134H802V135H804V133H806V138H807V140H809V139H810V133H812V137H813V132H815V133H820V137H821V133H822V134H823V137H824V139H825V140H827V138H828V137H829V132H830V133H834V136H835V138H836V140H837V132H840V133H841V140H843V143ZM845 143V138H846V133H853V137H854V133H857V137H858V140H859V138H860V136H861V135H863V133H868V138H869V133H872V132H873V138H874V137H875V135H876V133H877V132H881V136H882V138H883V140H884V143ZM271 154V150H272V149H273V147H274V145H275V144H276V143H279V145H281V149H282V145H283V144H284V149H285V151H286V144H294V143H296V148H297V143H299V145H300V149H301V146H302V149H303V151H304V149H305V148H306V143H310V148H311V149H312V146H313V144H318V143H319V144H321V146H322V148H323V151H325V143H326V144H328V147H329V150H330V144H333V143H336V147H337V148H338V150H339V151H340V154ZM344 154V150H345V151H346V152H347V154ZM353 154V151H354V149H355V147H356V146H358V149H359V151H360V154ZM364 154V152H367V154ZM400 154V153H402V154ZM535 154V152H536V154ZM676 154V150H678V151H682V150H684V154ZM686 154V151H687V149H688V145H692V148H693V144H695V145H696V144H698V145H700V151H701V154ZM703 154V149H704V144H708V148H709V149H710V151H711V149H712V144H713V145H715V144H718V148H719V151H721V144H725V145H726V148H727V151H728V154ZM730 154V149H731V145H732V147H733V144H734V147H736V148H737V151H738V154ZM740 154V149H741V147H742V146H743V144H745V146H746V145H747V146H748V145H753V151H754V152H755V149H756V146H757V145H759V144H763V145H764V151H765V154ZM768 154V149H769V147H770V146H773V145H774V144H776V148H777V144H780V151H782V149H783V147H784V145H785V144H790V145H791V146H792V149H793V154ZM795 154V151H796V149H797V147H798V145H801V144H803V148H804V144H806V150H807V151H808V152H809V144H810V148H811V145H816V144H820V146H821V149H822V145H823V148H824V145H827V152H828V154ZM830 154V151H831V149H832V145H834V149H835V146H836V145H837V144H839V145H840V147H841V145H842V151H844V144H848V149H849V145H853V150H854V149H855V151H856V145H860V148H861V147H862V146H863V144H865V145H867V148H869V149H870V150H871V151H872V154ZM873 154V149H874V144H878V145H879V149H880V151H881V154ZM883 154V149H884V145H885V154ZM271 165V159H272V154H273V155H276V156H277V162H278V161H280V154H282V155H287V157H288V162H289V165ZM290 165V162H292V163H293V162H295V163H297V162H299V165ZM335 165V163H337V165ZM341 165V161H342V162H343V161H344V165ZM347 165V163H348V158H353V159H359V163H360V165ZM365 165V163H367V162H368V163H371V165ZM378 165V163H381V165ZM621 165V162H622V163H624V165ZM627 165V163H629V165ZM667 165V162H668V161H669V159H670V158H671V154H674V155H676V159H677V154H679V155H681V162H682V165ZM684 165V161H685V154H686V159H687V154H688V156H689V155H693V154H694V155H695V156H696V159H697V165ZM699 165V162H700V155H701V159H702V155H704V157H705V158H706V159H707V160H708V164H709V165ZM711 165V160H712V154H713V156H716V155H717V157H718V159H719V157H720V159H721V162H722V160H723V155H724V154H725V161H726V158H727V161H728V165ZM730 165V160H731V157H732V156H734V155H737V160H738V161H739V155H741V154H743V155H746V156H747V159H748V165ZM751 165V162H752V160H753V155H754V154H757V155H763V157H764V159H765V165ZM766 165V161H767V155H769V157H770V154H774V156H775V162H776V159H777V157H778V155H781V159H783V161H785V158H786V155H788V158H789V160H790V165ZM792 165V162H793V154H797V158H798V156H799V155H800V154H802V159H803V154H804V162H805V159H806V154H810V161H811V165ZM815 165V161H816V159H817V154H822V159H823V161H825V155H826V157H827V154H831V157H832V159H833V161H834V165ZM838 165V162H839V155H840V159H841V155H848V157H850V159H851V162H853V160H854V157H855V155H858V159H859V160H860V162H861V165ZM864 165V162H865V161H866V159H867V154H871V155H874V154H875V155H877V157H878V159H879V160H880V155H884V160H885V165ZM271 177V171H272V166H273V177ZM276 177V175H282V177ZM319 177V175H320V177ZM324 177V174H331V177ZM336 177V173H337V174H338V173H347V177ZM398 177V175H402V177ZM640 177V175H642V177ZM660 177V174H661V167H664V172H665V177ZM667 177V172H668V167H672V173H673V177ZM675 177V174H676V172H677V166H678V168H680V166H681V167H682V171H684V173H685V174H687V166H690V167H692V174H693V177ZM695 177V174H696V167H702V166H703V171H704V166H705V171H706V172H707V174H708V177ZM711 177V174H712V172H713V171H714V170H715V166H717V167H718V172H719V174H720V167H724V166H726V169H727V171H728V177ZM730 177V172H731V167H732V168H733V167H736V169H738V172H739V167H741V168H742V171H743V177ZM746 177V176H747V172H748V170H750V166H753V167H756V170H757V172H758V174H760V166H763V171H764V177ZM766 177V174H767V167H769V171H770V166H774V174H775V177ZM776 177V172H777V169H778V168H781V167H783V166H785V167H786V173H787V166H788V174H790V171H791V167H794V177ZM796 177V173H797V166H800V171H801V173H802V171H803V173H805V167H808V172H809V177ZM813 177V175H814V166H817V171H818V167H819V166H822V167H823V171H824V167H825V171H826V167H828V169H829V171H830V175H831V177ZM835 177V174H836V167H838V166H839V167H840V172H841V175H842V174H843V175H853V174H854V175H862V177ZM863 177V171H864V167H865V166H866V171H868V166H869V167H872V169H873V170H874V172H875V174H876V177ZM878 177V173H879V170H880V166H884V173H885V177ZM271 188V183H272V178H273V185H275V186H279V185H280V186H281V188ZM337 188V185H340V186H341V185H342V186H343V185H344V186H345V185H348V186H349V185H350V188ZM352 188V186H353V188ZM356 188V186H358V188ZM618 188V186H620V188ZM651 188V186H652V181H659V182H660V183H661V184H662V185H663V186H664V188ZM666 188V184H667V182H668V177H669V178H672V180H673V182H674V188ZM675 188V186H676V183H677V181H678V180H679V178H691V186H692V188ZM694 188V183H695V178H698V177H700V179H701V177H705V185H706V188ZM707 188V185H708V177H712V178H714V177H716V178H719V182H720V188ZM722 188V184H723V182H724V177H727V180H728V178H731V177H732V184H733V188ZM735 188V186H736V178H740V182H741V184H742V188ZM743 188V185H744V178H748V177H751V180H752V184H753V180H754V181H755V183H756V184H757V178H760V183H761V188ZM764 188V183H765V177H767V180H768V178H770V177H774V184H775V188ZM776 188V183H777V177H779V182H781V177H783V181H784V184H785V185H786V183H787V180H788V177H789V185H790V188ZM793 188V185H794V178H798V179H799V183H800V178H803V177H807V179H808V182H809V188ZM811 188V185H812V177H813V181H814V180H816V177H818V185H819V183H820V184H821V179H825V177H827V178H830V177H831V185H832V188ZM838 188V186H840V188ZM843 188V185H844V178H848V179H849V182H851V184H852V185H854V178H858V182H859V185H860V188ZM863 188V186H866V185H867V186H871V188ZM877 188V182H879V178H883V182H884V185H885V188ZM271 199V194H272V195H273V191H274V193H275V189H278V194H279V199ZM291 199V197H293V196H295V195H296V196H297V197H298V195H301V197H302V195H303V199ZM307 199V195H308V193H309V191H310V192H313V193H314V191H317V197H318V199ZM508 199V197H510V199ZM602 199V197H603V199ZM650 199V196H652V199ZM654 199V194H655V191H656V193H657V188H660V189H664V196H665V199ZM667 199V196H668V189H669V188H673V193H674V196H675V199ZM677 199V196H678V189H679V192H680V188H682V190H685V189H688V198H689V199ZM690 199V194H691V191H692V188H697V196H698V195H699V188H700V191H702V193H703V199ZM704 199V196H705V188H707V193H708V189H711V188H715V194H716V196H717V199ZM719 199V196H720V193H721V189H722V192H723V190H724V189H726V188H728V193H729V189H731V188H733V193H734V188H735V195H736V196H737V199ZM739 199V196H741V190H742V188H745V193H746V189H750V192H751V194H752V199ZM754 199V193H755V189H759V192H761V193H762V195H763V196H764V189H770V196H771V199ZM774 199V194H775V189H777V194H778V188H782V189H785V195H786V199ZM787 199V194H788V192H789V189H790V188H793V195H795V196H796V193H797V189H803V196H804V199ZM806 199V194H807V191H808V189H814V193H815V189H816V195H817V196H818V199ZM820 199V196H821V194H822V189H824V188H825V193H827V188H828V190H829V188H832V195H833V192H834V196H837V188H838V191H839V193H840V188H841V193H842V188H844V189H849V194H850V196H851V195H852V192H853V189H854V188H858V192H859V194H861V189H864V188H867V191H870V196H871V195H872V199ZM874 199V193H875V191H876V189H878V193H879V189H881V188H884V196H885V199ZM271 211V208H272V207H273V204H276V210H277V211ZM279 211V209H284V211ZM286 211V209H287V208H288V209H289V208H291V211ZM295 211V209H296V208H299V211ZM300 211V208H301V203H305V204H308V205H309V209H310V211ZM315 211V208H317V207H318V208H320V209H321V207H322V211ZM549 211V209H550V211ZM612 211V209H614V211ZM617 211V209H620V211ZM636 211V206H637V207H640V208H642V206H643V208H644V207H649V208H650V206H651V200H657V202H658V201H660V200H664V208H666V206H667V201H668V204H670V201H674V200H675V207H676V206H677V208H678V207H679V201H686V205H687V211ZM688 211V206H689V204H690V202H691V206H692V201H693V205H694V201H695V207H697V205H698V203H699V200H701V201H704V207H705V211ZM706 211V208H707V205H708V200H712V201H717V200H719V208H720V210H721V205H722V201H724V205H725V211ZM726 211V208H727V206H728V201H729V203H730V200H731V201H735V203H736V205H737V208H738V206H739V200H740V207H741V200H743V202H744V205H745V211ZM746 211V208H747V200H755V203H756V204H757V206H758V208H759V205H760V203H761V201H763V200H765V208H767V211ZM769 211V205H770V200H771V205H772V200H776V202H777V203H778V205H779V207H780V205H781V206H782V202H783V201H787V207H788V211ZM789 211V208H790V201H795V203H797V202H799V200H801V201H803V208H804V211ZM805 211V207H806V205H807V203H808V201H811V202H812V205H813V201H814V203H815V200H816V207H817V205H818V201H820V205H821V208H822V211ZM829 211V210H830V211ZM276 222V220H277V219H278V220H279V222ZM281 222V220H283V222ZM290 222V219H291V218H293V219H295V222ZM297 222V219H298V218H300V219H301V218H302V222ZM304 222V218H306V222ZM308 222V217H309V218H312V219H313V222ZM321 222V218H322V219H326V218H327V219H333V222ZM494 222V219H496V222ZM613 222V220H617V222ZM620 222V220H621V219H622V218H623V215H625V218H626V215H627V218H628V215H630V216H631V218H632V219H633V220H634V222ZM637 222V219H638V212H640V215H641V211H647V217H648V219H649V218H650V216H651V218H652V212H656V218H657V222ZM659 222V219H660V212H664V211H668V214H669V218H670V217H671V219H672V212H677V211H680V216H682V214H683V212H684V211H690V213H693V214H694V216H695V222ZM698 222V216H699V212H705V214H706V216H708V218H709V219H711V218H712V216H713V211H717V213H718V212H721V213H722V212H723V217H724V219H725V222ZM730 222V219H731V211H735V213H736V212H739V213H740V211H741V214H744V215H745V217H746V222ZM747 222V218H748V215H749V213H750V211H753V215H754V218H756V215H757V212H759V216H760V212H763V218H765V216H766V214H767V212H768V211H771V212H772V218H774V216H775V214H776V211H780V212H782V214H783V216H784V218H786V215H787V214H788V212H789V216H790V222ZM793 222V217H794V214H795V212H797V211H800V214H801V211H806V219H808V211H811V219H812V222ZM815 222V220H816V219H817V220H818V219H819V222ZM879 222V217H880V212H881V213H883V216H884V220H885V222ZM271 233V231H284V233ZM289 233V229H291V230H292V229H293V228H294V230H295V229H296V230H297V229H300V230H301V229H302V228H303V229H304V233ZM311 233V231H314V233ZM320 233V231H321V230H322V233ZM506 233V231H508V233ZM616 233V229H617V225H618V229H619V226H623V230H624V233ZM626 233V231H627V223H630V225H631V223H635V224H641V228H642V224H644V226H645V228H646V233ZM651 233V229H652V226H653V225H654V222H658V223H659V228H660V233ZM662 233V231H663V222H664V223H668V222H669V223H670V224H671V223H674V225H676V226H677V228H679V223H680V225H681V223H683V226H684V227H685V230H686V233ZM691 233V230H692V228H693V223H694V225H697V223H702V228H703V230H705V227H706V222H711V227H712V230H713V233ZM718 233V229H719V227H720V225H722V223H724V222H726V224H727V226H728V228H729V233ZM732 233V230H733V228H734V225H735V224H736V223H738V224H739V222H743V226H745V228H746V229H747V230H748V228H749V222H759V224H760V227H761V229H762V230H763V233ZM766 233V230H767V229H768V227H769V226H771V222H777V223H780V224H781V227H783V223H786V227H787V230H788V233ZM792 233V230H793V222H798V224H801V223H803V225H804V227H806V224H807V222H810V225H812V226H813V229H814V233ZM819 233V227H820V225H821V223H824V222H827V223H830V228H831V230H832V233ZM834 233V230H835V231H836V233ZM840 233V230H842V231H843V233ZM849 233V231H852V233ZM862 233V231H863V229H864V228H865V227H868V226H869V225H873V226H875V229H876V230H877V228H878V227H879V225H883V229H885V233ZM271 245V241H272V238H273V243H276V242H277V245ZM279 245V241H280V242H281V243H282V241H284V242H286V243H287V242H288V241H289V238H291V240H292V241H293V243H294V245ZM490 245V243H491V242H499V245ZM547 245V243H549V245ZM577 245V243H578V242H579V245ZM584 245V243H586V245ZM606 245V243H607V238H609V237H613V243H614V245ZM615 245V239H616V235H619V236H620V239H621V235H623V237H624V235H626V239H627V235H628V244H629V245ZM632 245V240H633V237H634V234H636V235H641V239H642V241H644V234H648V245ZM651 245V242H652V241H653V239H654V238H655V239H656V235H666V237H667V240H668V241H669V239H670V237H671V234H672V241H673V245ZM674 245V242H675V235H677V234H680V237H681V235H685V239H686V240H687V242H689V239H690V234H692V235H693V237H696V235H697V240H698V236H699V235H702V240H703V236H704V237H705V240H706V245ZM710 245V242H711V240H712V237H713V235H714V234H717V238H718V235H720V240H721V242H723V235H726V239H727V236H728V235H737V240H738V242H739V241H740V239H741V237H742V235H747V236H748V239H749V241H750V245ZM757 245V240H758V235H760V234H761V237H769V235H771V242H772V240H773V238H774V235H775V234H776V237H778V238H779V241H780V240H781V234H782V239H783V234H785V239H786V245ZM788 245V242H789V235H794V236H795V234H798V235H802V240H803V242H804V240H805V235H808V237H809V234H812V244H813V245ZM815 245V243H816V241H817V238H818V237H822V238H823V239H824V243H826V245ZM834 245V242H835V237H836V241H837V237H840V238H841V237H844V239H845V241H846V245ZM850 245V241H851V239H852V241H853V238H854V237H856V238H859V241H861V238H863V243H864V245ZM867 245V243H874V245ZM877 245V243H880V245ZM407 256V253H408V254H409V256ZM421 256V254H423V256ZM502 256V255H506V256ZM597 256V252H598V250H599V248H603V249H605V252H606V256ZM609 256V253H610V249H614V255H615V256ZM617 256V253H618V251H619V246H622V247H623V246H625V250H626V253H627V251H628V246H630V250H631V253H632V256ZM635 256V253H636V247H640V256ZM643 256V254H644V251H645V246H647V245H649V246H654V247H656V248H657V250H658V251H659V252H660V254H661V250H662V246H667V245H668V250H669V245H670V246H672V252H673V256ZM674 256V252H675V250H676V245H678V247H679V246H683V251H684V253H685V251H686V246H687V250H689V246H693V250H694V255H695V246H697V247H699V246H701V250H702V246H703V253H704V252H705V246H707V245H710V250H711V249H712V252H713V253H714V246H718V256ZM721 256V253H722V251H723V249H724V252H725V248H726V246H733V250H734V253H736V250H737V245H739V248H740V246H742V245H745V247H748V248H750V249H751V251H752V252H753V245H754V250H755V245H757V252H758V256ZM760 256V252H761V246H764V248H765V245H767V248H768V250H769V252H770V250H771V248H773V246H774V245H777V252H778V253H780V246H781V250H782V248H784V246H785V251H786V256ZM788 256V255H789V252H790V251H791V250H792V246H793V248H794V245H802V251H803V253H804V250H805V246H806V245H809V250H810V245H812V247H813V252H814V251H815V253H816V245H819V246H820V250H821V251H822V256ZM824 256V253H825V252H826V245H828V252H829V248H830V246H833V245H834V246H836V247H837V246H840V253H841V250H842V248H843V245H847V246H852V248H853V246H854V245H855V246H856V253H857V256ZM858 256V252H859V251H860V250H861V248H862V249H867V253H868V256ZM874 256V253H875V254H876V253H877V256ZM882 256V254H884V256ZM289 267V265H290V267ZM395 267V265H396V267ZM482 267V264H483V265H484V267ZM593 267V263H594V261H595V263H596V265H597V267ZM602 267V264H603V256H606V257H607V258H610V259H611V261H612V266H613V264H614V262H615V256H618V261H619V267ZM623 267V264H624V257H625V256H628V259H629V258H631V261H632V256H634V263H635V260H636V262H637V264H639V262H640V261H641V257H644V258H645V261H646V267ZM651 267V261H652V259H653V257H661V256H663V261H664V256H665V257H666V264H667V263H668V261H669V257H672V256H673V258H674V257H675V256H677V261H678V263H679V267ZM683 267V264H684V261H685V262H686V258H689V257H691V260H692V262H693V267ZM695 267V262H696V260H697V258H698V263H699V257H702V261H703V264H705V262H706V263H707V258H709V263H710V267ZM715 267V262H716V260H717V259H718V257H721V259H722V263H723V259H724V258H728V264H729V267ZM733 267V263H734V258H738V259H739V260H741V258H742V260H744V258H746V264H747V262H748V259H749V258H750V257H752V261H753V257H754V264H756V257H759V259H760V262H761V264H762V267ZM772 267V264H773V262H774V261H775V258H779V262H780V264H781V257H784V258H785V260H786V262H787V264H788V267ZM790 267V265H793V264H794V265H796V267ZM805 267V265H806V263H807V264H808V260H810V259H813V261H814V259H816V260H817V265H819V264H820V263H821V259H825V260H826V259H827V260H828V259H832V265H833V263H834V261H835V260H836V259H840V261H841V262H842V264H843V265H844V267ZM851 267V266H857V265H858V267ZM356 278V274H357V275H359V278ZM363 278V273H364V274H367V275H368V274H369V275H370V274H371V275H372V274H373V273H374V274H376V275H377V278ZM580 278V275H581V272H583V268H584V269H587V275H588V278ZM592 278V275H593V274H594V268H597V267H598V268H602V269H603V268H604V267H607V273H608V274H609V268H610V267H613V268H616V274H617V272H618V267H620V268H622V270H623V271H624V274H625V278ZM628 278V274H629V272H630V267H634V268H635V269H638V270H639V273H640V275H641V267H645V268H649V269H651V268H654V274H655V275H656V274H657V272H658V268H659V267H662V272H663V274H664V278ZM669 278V273H670V268H673V269H674V267H676V269H677V268H681V275H682V278ZM683 278V275H684V274H685V273H686V267H688V272H690V267H692V268H696V275H697V278ZM698 278V275H699V274H700V272H701V271H702V269H704V267H705V269H707V268H710V267H713V275H714V274H715V268H716V272H717V268H719V272H720V278ZM721 278V276H722V273H723V271H724V270H727V268H729V269H730V268H732V267H735V268H736V270H737V275H739V272H740V271H741V268H744V275H745V278ZM747 278V276H750V278ZM754 278V275H755V274H756V268H759V272H760V271H761V270H762V268H763V269H766V271H767V268H769V274H770V275H771V278ZM772 278V276H774V275H775V276H776V278ZM853 278V275H858V274H859V275H860V276H863V275H865V276H866V275H868V276H869V275H872V274H873V275H874V276H875V275H880V276H881V275H882V276H883V275H884V276H885V278ZM271 290V287H273V286H274V290ZM277 290V287H278V283H279V290ZM282 290V288H285V290ZM516 290V289H517V290ZM561 290V287H562V288H565V290ZM566 290V287H567V281H569V283H570V281H572V280H574V285H575V281H576V282H577V280H580V282H581V283H582V285H583V290ZM585 290V286H586V285H587V283H593V284H594V286H595V287H596V288H597V282H600V285H601V284H602V285H603V286H604V290ZM606 290V289H607V279H613V281H615V282H616V284H617V287H618V280H622V290ZM624 290V287H625V285H626V282H628V283H631V285H632V286H633V290ZM636 290V287H637V285H638V280H640V283H641V280H644V284H645V280H646V282H647V284H648V287H650V285H651V283H652V279H653V280H654V279H656V282H658V283H659V285H660V287H661V280H662V283H664V284H666V290ZM669 290V285H670V280H673V281H676V285H677V284H678V280H680V284H681V280H682V279H684V280H689V284H690V290ZM691 290V285H692V282H693V281H697V279H702V280H704V284H705V280H707V279H708V284H710V280H711V287H712V288H713V290ZM714 290V285H715V282H716V280H718V284H719V286H720V283H721V286H722V287H723V284H724V282H725V280H728V284H729V280H730V282H731V284H732V279H735V287H736V290ZM738 290V286H739V283H740V282H741V280H743V284H744V280H749V287H750V285H751V283H752V281H759V280H760V284H761V280H762V281H766V282H767V280H771V287H772V290ZM773 290V288H774V283H779V284H780V282H783V285H784V286H785V282H786V288H788V282H789V288H790V282H792V283H795V282H797V283H799V286H800V287H801V288H802V290ZM804 290V288H806V290ZM814 290V287H816V288H817V286H818V287H819V288H820V287H821V288H822V287H824V288H825V287H826V290ZM882 290V287H883V288H884V290ZM275 301V298H280V301ZM281 301V298H287V301ZM417 301V299H419V301ZM553 301V298H557V299H558V298H564V301ZM566 301V298H567V292H576V298H577V301ZM579 301V299H580V294H581V293H585V299H586V301ZM590 301V298H591V296H592V291H594V292H597V291H600V290H603V295H604V290H605V295H606V301ZM608 301V297H609V294H610V293H611V290H613V292H614V291H616V295H617V298H618V291H620V290H624V291H627V294H629V295H630V296H631V298H632V301ZM638 301V298H639V294H640V293H643V297H644V295H645V297H647V293H648V297H649V293H650V296H651V297H652V299H653V301ZM655 301V298H656V296H657V290H658V297H659V294H660V291H661V293H662V291H666V296H667V295H668V290H675V291H677V296H678V298H680V299H682V298H683V299H692V298H693V301ZM700 301V299H708V298H709V299H714V301ZM715 301V298H718V297H720V298H724V297H725V298H728V297H729V299H730V298H732V301ZM734 301V298H735V296H736V291H740V292H741V291H743V290H744V293H745V291H748V296H749V298H751V290H755V293H756V294H757V290H762V297H763V298H764V301ZM766 301V297H767V294H768V290H771V291H773V295H774V294H775V297H776V301ZM777 301V298H778V297H779V295H780V291H784V293H785V291H786V296H787V291H790V296H791V298H793V292H794V297H795V292H797V293H798V292H800V298H801V297H802V295H803V292H808V295H809V297H810V301ZM815 301V299H817V301ZM823 301V299H825V298H826V299H827V298H829V297H830V299H831V298H838V299H839V298H841V299H842V297H843V298H844V301ZM850 301V299H851V301ZM855 301V299H857V298H858V299H859V301ZM285 312V311H286V312ZM288 312V309H291V312ZM296 312V311H297V312ZM468 312V310H470V312ZM480 312V310H482V312ZM570 312V310H571V309H572V308H573V307H576V306H577V304H578V305H579V304H581V305H583V308H584V312ZM586 312V309H587V308H588V303H591V302H593V306H594V302H596V308H597V309H600V302H603V306H604V309H605V312ZM607 312V309H608V307H609V305H610V304H612V303H618V309H619V307H620V305H621V302H624V304H625V302H628V304H630V305H631V307H632V312ZM634 312V307H635V305H636V303H637V307H638V301H641V303H642V302H643V301H644V302H646V301H650V309H651V312ZM654 312V310H655V304H656V305H659V306H660V304H663V309H664V312ZM666 312V307H667V303H671V304H672V308H673V307H674V310H675V309H676V302H678V309H679V307H680V303H682V302H685V303H686V304H688V303H691V307H692V312ZM693 312V310H694V305H697V304H700V305H701V306H702V307H705V309H706V310H707V312ZM710 312V309H711V310H713V312ZM714 312V309H715V306H716V302H720V306H721V309H722V308H723V306H724V302H726V301H728V303H729V302H733V308H734V306H735V301H739V302H742V306H743V302H744V309H745V312ZM748 312V309H749V303H754V302H756V303H758V302H761V307H762V309H764V302H766V303H769V307H770V312ZM771 312V310H772V303H773V305H774V304H777V305H778V303H780V302H783V310H784V312ZM785 312V307H786V302H789V308H790V312ZM792 312V309H793V303H798V307H799V303H803V304H805V306H806V302H807V309H808V307H809V303H810V302H814V306H815V309H816V312ZM818 312V311H819V302H823V304H824V303H826V304H827V307H828V309H829V312ZM830 312V310H832V309H833V312ZM875 312V309H876V310H877V309H879V310H880V309H884V312ZM271 324V320H272V321H273V320H274V324ZM276 324V322H278V324ZM538 324V321H539V322H540V324ZM590 324V321H591V316H592V320H593V316H595V321H596V320H597V324ZM600 324V318H601V314H604V313H612V319H613V321H615V320H616V318H617V316H618V315H620V313H621V315H623V313H627V321H628V324ZM631 324V318H632V313H633V315H634V314H635V313H638V318H639V319H640V321H641V320H642V318H643V314H649V313H652V320H653V324ZM657 324V322H658V320H659V316H663V320H664V323H665V324ZM666 324V321H667V314H670V313H675V314H676V313H678V318H679V313H680V315H681V320H682V319H683V321H684V314H689V315H691V318H692V319H693V324ZM697 324V321H698V316H699V314H708V321H710V314H714V324ZM718 324V320H719V314H723V317H724V319H725V324ZM726 324V321H727V319H728V317H729V316H730V315H731V313H734V314H738V319H739V321H740V324ZM744 324V321H745V320H746V319H747V318H748V317H749V320H750V313H752V318H753V313H755V314H757V313H759V318H760V314H761V321H763V324ZM764 324V322H766V321H767V322H770V324ZM824 324V322H832V324ZM835 324V321H837V320H838V321H839V322H840V320H841V321H843V322H845V324ZM848 324V320H852V321H853V320H854V319H855V320H857V324ZM860 324V322H861V321H867V320H868V321H875V324ZM883 324V322H885V324ZM271 335V333H272V335ZM361 335V332H364V335ZM369 335V333H370V332H371V333H374V335ZM428 335V332H429V333H431V335ZM531 335V334H533V335ZM574 335V332H575V328H576V329H577V332H578V327H583V331H584V333H585V327H591V331H592V327H593V330H595V332H596V333H597V335ZM600 335V332H601V325H603V324H605V329H606V327H607V325H610V324H615V327H616V329H617V332H618V329H619V324H623V325H624V326H625V327H626V329H627V332H628V335ZM631 335V331H632V329H634V324H636V325H637V324H641V331H642V329H643V324H645V327H647V330H648V335ZM651 335V330H652V328H653V327H654V329H655V327H659V328H660V325H662V331H663V333H664V335ZM666 335V330H667V327H668V325H672V326H673V324H678V325H680V331H681V332H683V331H684V329H685V324H687V325H690V326H692V324H694V325H696V332H697V335ZM699 335V330H700V324H702V329H703V324H706V326H707V329H708V335ZM710 335V332H711V330H712V329H713V324H717V325H719V326H720V331H721V330H722V335ZM724 335V331H725V328H726V327H727V324H729V327H730V328H731V331H732V332H733V324H734V329H737V325H738V329H739V327H740V325H744V330H745V332H746V330H747V328H748V325H753V334H754V335ZM755 335V332H756V333H758V335ZM826 335V332H828V333H829V332H832V333H834V332H838V333H839V332H841V333H842V332H846V335ZM856 335V333H858V335ZM865 335V332H866V329H869V330H870V329H871V330H872V332H873V335ZM876 335V332H877V331H878V332H880V333H881V332H883V331H884V335ZM544 346V344H545V346ZM556 346V344H557V342H558V341H559V340H561V339H564V340H566V338H567V340H568V338H569V342H570V346ZM573 346V343H574V341H575V337H579V336H583V337H584V341H586V339H587V338H588V337H590V336H594V343H595V346ZM598 346V342H599V340H600V339H602V338H608V339H609V345H610V344H611V342H612V343H613V339H614V342H615V338H621V342H622V344H623V346ZM629 346V341H630V338H631V337H632V336H635V337H637V343H639V337H640V340H641V342H642V337H645V336H648V338H649V339H650V337H651V343H652V346ZM655 346V342H656V336H660V335H661V338H662V340H663V342H664V340H665V335H668V337H669V338H670V336H672V342H673V341H674V335H677V336H680V340H681V343H682V346ZM685 346V343H686V336H687V340H688V339H690V336H692V340H693V336H694V337H698V338H699V343H701V344H702V337H707V336H710V342H711V346ZM714 346V343H715V341H716V335H717V340H718V335H722V336H726V340H727V343H728V346ZM730 346V343H731V341H732V338H733V336H734V341H735V336H737V338H738V340H739V342H740V343H741V346ZM742 346V340H743V337H744V336H746V338H747V339H748V336H749V345H750V340H751V337H752V335H754V342H755V346ZM761 346V344H765V346ZM834 346V344H836V343H838V342H839V344H840V343H847V344H848V343H851V346ZM857 346V342H862V346ZM556 358V356H557V350H559V354H560V358ZM561 358V357H562V349H564V353H565V349H567V351H568V348H569V355H570V358ZM573 358V357H574V353H575V351H576V350H577V348H580V349H582V347H586V349H587V350H588V352H589V347H590V355H592V348H594V347H595V351H597V348H601V347H602V353H603V358ZM605 358V355H606V347H608V350H609V347H613V348H617V349H618V352H619V358ZM621 358V353H622V348H626V358ZM628 358V355H629V348H630V347H634V348H635V349H636V350H637V353H639V347H642V355H643V358ZM645 358V355H646V353H647V351H648V350H649V349H650V347H654V355H656V348H657V347H658V349H659V347H663V348H668V349H669V352H670V354H671V355H672V356H673V351H674V348H678V351H679V354H680V358ZM682 358V355H683V348H697V352H698V355H700V353H701V351H702V349H703V348H704V352H705V349H706V351H708V353H709V355H710V354H711V347H714V348H715V353H716V358ZM717 358V354H718V351H719V352H720V349H721V352H722V347H724V353H725V352H726V348H730V349H731V348H733V354H734V355H735V353H736V352H737V348H739V347H740V352H741V347H743V348H744V353H745V358ZM746 358V354H747V352H748V350H749V349H750V347H755V353H756V355H757V354H758V348H759V352H760V348H761V352H762V347H765V350H767V348H770V352H771V353H772V358ZM810 358V355H811V347H816V352H817V348H824V347H827V354H828V355H829V358ZM832 358V356H836V358ZM838 358V356H841V358ZM844 358V356H845V355H846V356H848V358ZM850 358V356H851V355H852V353H853V355H854V352H855V355H856V351H859V354H860V358ZM322 369V367H325V369ZM340 369V367H341V366H343V367H345V369ZM512 369V367H518V366H519V367H525V366H526V367H527V366H528V367H530V369ZM551 369V367H552V361H553V362H555V361H557V362H558V361H562V362H568V367H569V369ZM571 369V366H572V365H573V360H576V359H578V361H582V359H583V360H588V361H589V362H590V364H591V366H592V369ZM594 369V366H595V363H596V361H597V359H600V358H601V363H602V366H604V365H605V359H609V361H610V358H612V359H619V364H620V369ZM621 369V366H622V358H623V363H624V358H626V363H627V360H628V358H630V359H631V360H633V362H634V364H635V366H636V364H637V359H644V365H645V369ZM646 369V366H647V363H648V361H649V359H650V363H651V359H655V358H659V359H661V365H662V366H663V363H664V358H667V359H669V360H671V362H672V365H673V366H674V359H677V361H678V364H680V361H681V358H684V360H686V358H688V363H689V358H692V363H693V362H694V364H695V359H696V366H697V363H698V361H699V363H700V360H702V359H703V360H705V359H714V366H715V369ZM716 369V366H717V359H718V363H719V362H720V358H723V359H724V358H728V362H729V364H730V366H731V364H732V358H736V359H738V363H739V359H740V364H741V366H743V359H745V358H749V365H750V361H751V359H752V363H753V359H754V362H755V364H756V369ZM757 369V367H758V365H759V366H760V363H761V362H764V361H766V363H767V364H768V361H769V367H771V365H772V364H773V361H776V362H777V361H779V363H780V364H781V361H782V367H783V369ZM784 369V367H785V365H786V364H787V363H789V362H791V361H795V362H799V363H800V365H801V367H802V361H804V362H811V365H812V369ZM816 369V366H817V367H828V369ZM412 380V378H413V377H414V380ZM530 380V378H531V377H532V372H535V373H539V376H540V373H541V374H542V375H543V377H544V378H545V380ZM548 380V377H549V375H550V374H551V370H553V372H554V370H561V374H562V375H563V377H565V374H566V370H568V371H569V374H570V380ZM573 380V377H574V370H575V374H580V370H584V373H585V375H586V377H587V370H592V374H593V377H594V380ZM597 380V377H598V369H604V370H606V369H607V370H609V374H610V370H613V371H614V374H615V375H616V372H617V371H618V374H619V370H624V374H625V377H626V380ZM628 380V375H629V370H632V373H633V370H636V377H638V375H639V373H640V370H647V377H648V376H649V370H650V374H651V370H652V374H653V369H654V375H655V380ZM659 380V377H660V374H661V370H664V371H665V370H666V372H669V374H670V377H671V374H672V369H676V374H678V377H680V374H681V372H682V369H686V377H688V375H689V372H690V369H692V371H695V370H699V369H700V377H701V374H702V369H706V372H708V370H711V373H712V375H713V377H714V380ZM784 380V378H786V377H787V378H789V380ZM793 380V376H794V377H795V376H800V377H801V376H802V375H805V376H806V380ZM811 380V377H814V376H817V377H820V378H822V377H824V378H825V376H826V380ZM350 392V390H352V392ZM516 392V390H517V384H518V387H520V384H524V385H525V386H526V388H527V389H528V388H529V389H530V386H531V384H536V385H538V388H539V392ZM541 392V389H542V381H545V382H546V383H548V382H553V384H554V386H555V387H556V385H557V381H561V384H562V381H566V382H570V387H571V388H572V391H573V392ZM574 392V388H575V386H576V385H578V384H582V390H583V392ZM585 392V389H586V387H587V385H588V382H591V385H592V386H593V389H594V392ZM596 392V389H597V382H600V385H602V381H604V382H605V383H606V381H611V384H612V387H613V391H614V387H615V389H616V385H618V386H619V382H621V389H622V392ZM628 392V389H629V387H630V384H631V383H635V382H639V381H643V389H644V388H645V386H646V384H647V382H650V381H651V383H652V386H653V388H654V389H655V382H657V381H661V382H667V384H668V387H669V392ZM672 392V389H673V387H674V382H675V386H676V382H678V384H679V386H680V387H681V385H682V382H687V385H688V388H689V392ZM692 392V391H693V388H694V386H695V381H699V382H700V383H701V384H702V387H703V392ZM707 392V389H708V386H709V384H711V385H712V381H714V389H715V388H716V386H717V381H718V384H720V381H722V386H723V385H724V387H725V392ZM729 392V389H730V390H734V392ZM806 392V390H808V389H811V390H813V389H814V392ZM819 392V390H820V392ZM826 392V388H828V389H831V390H832V389H833V388H834V392ZM836 392V390H842V392ZM409 403V401H410V400H411V403ZM511 403V400H512V398H513V396H514V394H516V398H517V394H518V393H521V398H522V402H523V403ZM526 403V401H527V399H528V398H529V397H530V394H531V392H534V393H536V394H538V392H542V401H543V400H544V398H545V393H550V400H551V403ZM554 403V398H555V393H559V399H560V403ZM564 403V400H565V397H566V396H569V392H572V400H573V399H574V397H575V398H576V393H579V397H580V393H584V398H585V403ZM588 403V398H589V393H590V397H591V393H595V392H598V400H599V397H600V392H604V403ZM606 403V402H607V393H614V395H615V392H617V400H618V403ZM621 403V397H622V395H623V393H626V392H630V397H631V398H632V395H633V394H637V397H638V393H639V392H640V393H641V392H643V394H644V397H645V399H646V401H647V400H648V393H652V398H653V400H654V403ZM657 403V399H658V393H664V396H665V399H666V403ZM669 403V399H671V400H672V398H673V399H679V401H680V400H681V399H682V397H683V396H686V395H689V396H695V395H698V400H699V401H700V402H701V398H702V399H703V394H709V398H710V394H711V393H714V398H715V399H716V400H717V403ZM722 403V401H732V403ZM734 403V400H735V401H737V403ZM742 403V401H745V403ZM814 403V400H816V401H817V403ZM820 403V399H821V400H824V401H825V400H826V399H827V400H831V401H832V403ZM494 414V410H495V407H497V408H503V407H508V410H509V412H512V411H513V407H514V410H515V409H516V408H517V407H519V408H523V409H524V411H525V407H526V412H527V414ZM529 414V412H530V411H531V410H532V408H533V411H534V408H535V404H536V408H537V404H543V408H544V410H545V404H546V412H547V414ZM549 414V411H550V403H552V408H553V404H554V403H555V404H556V410H557V408H558V409H559V411H561V403H563V408H564V404H565V408H566V414ZM568 414V410H569V407H570V404H572V408H573V410H574V406H575V407H576V409H577V413H578V408H579V405H580V408H581V403H582V407H583V403H585V411H587V409H588V403H592V404H596V409H597V411H598V414ZM601 414V411H602V409H603V403H606V404H607V403H610V408H611V409H612V411H613V409H614V406H615V404H616V403H619V406H622V404H625V413H626V414ZM635 414V410H636V404H637V408H638V404H639V405H641V406H642V409H644V406H645V404H650V410H651V408H652V410H653V414ZM657 414V411H658V408H659V407H660V404H664V409H665V411H666V410H667V408H668V407H669V404H671V405H673V408H674V403H676V405H679V404H684V411H685V414ZM688 414V411H689V410H690V408H691V407H692V406H694V405H695V404H696V403H697V405H698V403H700V404H701V405H703V406H704V409H705V414ZM708 414V411H709V412H714V414ZM754 414V411H755V408H756V404H758V405H759V409H760V406H761V408H763V410H764V411H765V414ZM766 414V412H776V411H777V414ZM784 414V412H785V411H786V414ZM481 426V423H482V421H483V419H484V423H485V420H486V419H489V423H490V422H491V418H495V420H496V421H497V423H498V426ZM500 426V423H501V422H502V418H507V419H508V418H511V422H512V426ZM513 426V424H514V419H515V421H516V418H518V419H519V420H520V418H522V422H523V426ZM528 426V423H529V422H530V420H531V419H532V418H534V416H535V417H536V416H538V415H540V416H543V415H544V416H545V417H546V420H547V426ZM549 426V423H550V421H551V420H553V419H554V415H555V420H556V415H557V423H558V422H559V419H560V417H561V420H562V415H564V419H565V422H566V426ZM573 426V423H574V421H575V415H578V420H579V418H580V417H583V415H587V423H588V426ZM592 426V423H593V422H594V416H595V422H596V417H597V415H598V417H599V415H602V417H603V416H606V423H607V426ZM613 426V423H615V420H616V416H617V420H618V416H619V417H620V415H626V421H627V423H629V415H633V417H634V420H635V426ZM637 426V423H638V420H639V417H640V415H645V416H647V417H648V420H649V422H650V423H651V426ZM654 426V424H655V416H660V418H661V415H663V422H664V423H665V416H666V420H667V416H670V415H671V420H672V416H676V423H677V420H678V415H680V420H681V421H682V423H683V426ZM685 426V423H686V416H688V417H692V416H693V417H694V416H695V415H697V416H699V421H700V423H701V426ZM703 426V423H704V422H705V421H706V420H707V419H708V418H709V417H712V416H713V420H714V416H716V415H718V416H721V421H722V426ZM728 426V423H729V421H730V419H731V418H733V417H734V415H737V418H738V416H739V422H740V415H741V423H742V426ZM745 426V424H749V426ZM755 426V423H756V422H757V421H758V417H759V416H762V417H764V416H767V420H768V422H769V423H770V426ZM774 426V424H777V426ZM287 437V434H288V437ZM472 437V433H473V431H474V430H477V429H481V434H482V437ZM484 437V434H485V433H486V432H487V431H488V427H490V426H494V427H495V428H496V431H497V433H498V434H499V432H500V429H501V427H503V433H504V437ZM505 437V434H506V432H507V431H508V430H510V427H515V426H517V431H518V436H519V434H520V427H524V434H525V437ZM570 437V431H571V432H572V427H573V426H574V427H575V426H579V432H580V436H581V434H582V431H583V427H586V432H587V437ZM589 437V434H590V426H593V427H595V426H598V428H599V427H600V430H601V431H604V426H606V434H608V435H609V432H610V430H611V427H613V426H615V427H617V428H618V426H619V431H620V427H622V432H623V437ZM629 437V434H630V432H631V427H633V428H634V429H635V428H639V432H640V434H641V437ZM643 437V433H644V428H647V432H648V428H649V429H651V430H652V434H653V437ZM656 437V434H657V430H658V429H660V430H661V435H662V434H663V437ZM670 437V434H671V427H676V428H677V427H681V428H683V432H684V429H685V432H686V437ZM689 437V434H690V430H692V435H693V433H694V434H697V435H698V434H699V437ZM768 437V435H769V434H770V437ZM773 437V435H777V437ZM779 437V434H782V437ZM787 437V434H790V433H792V434H793V437ZM456 448V445H457V444H458V438H461V441H465V438H473V443H474V445H476V442H477V437H481V445H482V448ZM483 448V443H484V438H488V442H489V440H491V437H494V444H495V445H496V437H499V438H500V439H501V438H503V440H504V442H505V444H506V437H508V442H509V444H510V448ZM511 448V447H512V437H516V438H518V437H522V445H523V447H524V438H534V440H535V442H536V448ZM539 448V445H540V443H541V437H544V442H546V440H547V442H548V444H549V437H553V440H554V441H555V444H556V448ZM558 448V445H559V443H560V438H566V437H570V442H571V445H572V444H573V443H574V438H580V439H582V440H583V443H584V445H585V448ZM587 448V447H588V437H590V440H592V444H593V437H594V442H595V437H597V438H599V437H601V442H602V439H603V442H604V445H605V440H606V439H607V438H608V439H609V437H611V439H612V444H613V443H614V445H615V448ZM617 448V446H619V448ZM628 448V446H632V445H633V448ZM642 448V446H643V445H644V446H646V445H647V446H655V445H656V446H658V445H659V446H662V448ZM665 448V442H666V440H667V437H669V438H670V437H672V438H673V437H675V440H677V444H678V443H679V445H680V448ZM681 448V443H682V438H690V441H691V443H692V445H694V443H695V438H699V445H700V448ZM705 448V446H707V445H708V448ZM713 448V445H714V444H715V446H716V445H724V448ZM728 448V445H732V444H733V445H734V446H736V444H737V445H739V446H740V448ZM741 448V446H745V445H746V446H748V448ZM761 448V445H762V446H768V448ZM429 459V457H430V456H431V455H432V452H434V453H435V452H443V454H444V452H446V457H447V459ZM448 459V454H449V451H450V450H453V449H460V456H461V459ZM462 459V456H463V449H465V451H467V449H469V450H473V451H475V450H479V449H480V455H481V456H482V459ZM485 459V455H486V456H487V452H489V451H492V456H493V453H494V452H496V451H498V456H499V459ZM502 459V455H503V453H504V449H505V451H507V449H508V453H509V454H510V456H511V449H514V453H515V448H517V449H520V451H521V453H522V456H523V453H524V451H525V450H528V449H530V450H531V453H532V448H535V449H537V456H538V459ZM540 459V458H541V453H543V451H545V449H547V448H550V449H552V450H554V449H555V453H556V456H557V455H558V448H561V455H562V459ZM569 459V458H570V454H571V448H573V451H574V448H577V449H578V448H579V453H580V455H581V449H583V448H585V451H587V453H588V455H589V459ZM593 459V457H594V456H595V454H596V452H597V455H599V451H601V452H603V453H604V455H606V453H607V451H613V453H615V455H616V458H617V459ZM624 459V457H625V455H626V449H628V450H631V449H633V453H634V450H635V457H636V454H637V450H640V453H641V449H644V450H645V456H646V459ZM648 459V456H649V454H650V451H651V450H652V449H653V450H659V449H660V452H661V450H663V456H664V459ZM666 459V457H671V459ZM674 459V457H679V456H680V459ZM739 459V457H742V459ZM746 459V455H747V456H748V455H749V456H753V457H754V456H755V459ZM758 459V457H764V459ZM417 471V467H418V468H419V467H421V468H422V467H426V466H429V467H433V471ZM437 471V468H438V466H439V461H442V463H443V461H446V465H447V466H448V470H449V471ZM452 471V466H453V464H454V463H456V461H457V462H459V461H461V468H463V467H464V468H465V463H466V461H473V462H476V463H477V466H478V468H480V461H483V465H484V468H485V471ZM488 471V469H489V462H498V461H502V466H503V468H504V461H508V471ZM509 471V468H510V466H511V465H512V461H516V462H517V466H518V468H519V471ZM520 471V469H521V461H524V463H525V462H529V466H530V462H531V467H532V466H533V469H534V468H535V465H536V464H537V466H538V461H540V466H541V471ZM545 471V466H547V462H550V463H551V464H553V465H554V468H556V462H561V461H566V470H567V471ZM570 471V468H572V461H573V465H574V461H576V462H578V463H579V468H581V471ZM584 471V466H585V464H586V463H589V462H594V468H596V462H597V461H601V468H602V471ZM604 471V466H605V462H606V461H609V463H610V465H611V467H612V468H613V467H614V462H618V465H619V461H620V463H621V462H625V468H626V471ZM628 471V468H629V461H630V462H631V461H633V463H635V461H636V463H641V462H642V466H643V471ZM689 471V468H690V461H694V462H697V460H699V464H700V466H701V471ZM707 471V468H708V467H709V468H710V471ZM718 471V468H719V469H720V468H721V467H724V468H728V469H729V467H730V468H731V469H732V468H734V469H735V468H736V469H737V471ZM414 482V480H415V479H416V475H418V478H420V475H421V476H423V481H424V480H425V479H426V478H427V477H428V474H433V478H434V475H437V476H438V478H439V482ZM440 482V479H441V474H442V477H443V473H444V471H448V472H451V471H452V479H453V482ZM472 482V480H477V482ZM485 482V479H486V477H487V473H490V472H495V474H496V477H497V478H498V472H499V473H501V474H502V473H503V472H505V476H506V473H509V472H513V478H514V480H515V479H516V477H517V476H518V475H519V472H524V473H527V477H528V479H529V477H530V472H532V476H533V472H534V475H535V477H536V479H537V477H538V475H539V473H540V478H542V473H545V472H546V477H547V479H548V480H549V477H550V472H553V473H554V471H555V472H559V475H560V477H561V478H562V479H563V476H564V475H565V473H566V472H571V477H572V479H573V478H574V477H575V471H578V472H580V477H581V472H582V474H583V476H584V477H585V478H586V479H587V477H588V474H589V473H590V474H591V475H592V471H594V478H595V482ZM599 482V479H600V477H601V472H602V471H606V472H608V474H609V476H610V479H612V471H613V474H615V472H617V476H618V472H619V474H620V477H621V482ZM623 482V478H624V477H625V475H627V479H628V482ZM633 482V481H634V477H635V475H636V471H642V476H644V472H646V479H648V478H649V476H650V475H652V474H653V472H654V471H658V472H660V476H661V482ZM662 482V480H663V478H664V474H665V478H667V476H668V477H669V478H670V482ZM676 482V480H677V478H678V480H679V482ZM683 482V479H684V471H686V476H687V471H691V473H694V478H695V479H696V478H697V472H699V476H700V480H701V482ZM705 482V479H706V480H708V482ZM391 493V491H398V493ZM405 493V490H406V488H407V486H408V485H409V483H412V487H413V483H414V490H416V483H417V487H418V486H419V488H420V490H421V488H422V483H424V485H426V489H427V484H430V483H431V486H432V488H433V490H434V493ZM438 493V490H439V483H440V487H441V483H443V485H445V484H446V483H449V490H451V489H452V483H455V484H457V483H460V487H461V485H462V486H464V483H467V490H468V493ZM470 493V490H471V486H473V487H474V486H479V485H480V489H481V493ZM483 493V490H484V488H485V487H486V486H487V485H488V483H490V482H493V483H494V487H495V488H496V492H497V490H498V488H499V487H500V482H501V483H505V485H506V488H507V493ZM508 493V490H509V483H511V487H512V483H519V484H520V487H521V490H522V489H523V483H524V487H525V483H526V488H527V493ZM528 493V490H529V487H530V483H533V482H534V483H537V482H538V483H539V482H541V488H542V490H543V487H544V485H545V484H547V483H554V490H555V493ZM556 493V490H557V487H558V483H561V482H565V483H569V485H570V488H571V493ZM575 493V491H576V493ZM587 493V491H589V493ZM632 493V490H633V483H634V482H635V483H636V484H637V482H639V487H640V482H641V483H642V484H643V483H644V489H645V488H646V490H647V493ZM651 493V491H656V490H657V493ZM661 493V491H664V490H665V491H670V493ZM674 493V488H676V489H677V490H678V489H681V493ZM682 493V491H686V493ZM689 493V491H690V490H691V489H692V493ZM305 505V503H306V502H307V503H308V505ZM384 505V500H385V497H386V496H388V495H389V496H394V495H395V496H396V497H397V498H399V496H402V502H403V505ZM405 505V499H406V495H412V497H413V494H417V497H418V495H419V499H420V500H421V502H422V505ZM423 505V502H424V496H428V497H429V498H430V500H431V505ZM434 505V502H435V500H436V495H437V497H439V495H441V499H442V495H445V499H446V501H447V502H449V499H451V494H453V495H455V499H456V498H457V500H458V502H459V505ZM460 505V501H461V495H462V499H464V495H466V498H467V501H468V502H469V499H470V495H475V499H476V502H477V505ZM478 505V503H480V502H481V505ZM484 505V502H485V501H486V495H489V496H493V501H494V502H495V505ZM500 505V502H501V499H502V496H503V494H505V495H506V494H509V502H511V495H519V502H521V494H525V499H526V502H527V505ZM529 505V500H530V497H531V500H532V496H535V495H536V496H537V500H538V502H539V505ZM541 505V503H546V502H547V503H548V505ZM587 505V503H589V505ZM593 505V504H594V501H595V496H601V495H608V504H609V505ZM611 505V501H612V497H614V501H615V497H616V498H618V502H619V505ZM623 505V502H624V503H629V502H630V503H633V505ZM638 505V502H639V503H640V502H643V503H644V502H649V503H650V505ZM652 505V503H656V505ZM685 505V501H686V502H689V505ZM691 505V502H692V503H693V502H694V503H695V502H698V505ZM702 505V502H705V503H706V502H708V501H709V502H711V501H712V503H713V502H714V505ZM715 505V503H717V505ZM380 516V515H381V514H382V510H385V509H386V508H389V509H390V512H391V516ZM393 516V514H394V512H395V511H396V506H402V507H403V509H404V511H405V513H406V510H407V511H408V506H409V509H410V510H411V513H412V516ZM415 516V513H416V512H417V511H418V508H419V507H421V505H427V509H428V512H429V511H430V512H431V513H432V511H433V508H434V506H439V512H440V514H441V512H442V511H443V510H444V505H448V506H449V507H452V505H453V511H454V512H455V514H456V513H457V506H460V510H461V508H462V506H465V510H467V513H468V516ZM470 516V514H471V513H472V512H473V511H474V510H475V506H480V508H483V509H484V511H485V512H486V506H487V514H488V511H489V507H491V506H492V509H493V510H494V513H496V510H497V506H499V510H500V505H503V506H505V507H506V508H507V511H508V513H509V512H510V510H511V508H513V506H514V508H515V505H518V506H520V510H521V512H522V516ZM528 516V513H529V512H530V511H531V507H532V511H533V507H534V508H538V507H539V511H540V506H541V507H543V508H544V509H545V511H546V513H547V506H551V508H552V506H553V508H554V509H555V511H556V513H557V516ZM560 516V515H561V506H563V505H567V510H568V513H570V511H571V505H572V507H573V505H577V506H578V509H579V511H580V513H581V514H584V513H585V514H586V513H587V514H588V516ZM593 516V514H594V513H595V514H598V516ZM625 516V513H626V514H627V516ZM653 516V513H658V514H660V513H661V514H662V513H663V512H665V513H666V512H667V514H668V516ZM671 516V514H672V512H674V514H675V513H676V514H677V513H678V514H679V513H681V516ZM682 516V513H687V512H688V513H691V516ZM273 527V524H274V525H275V527ZM363 527V524H364V517H370V519H371V520H372V522H373V524H375V517H379V524H380V527ZM385 527V526H386V516H388V517H389V519H390V517H392V516H395V518H397V517H398V520H399V522H400V524H401V527ZM403 527V524H404V516H405V524H406V521H407V519H408V518H412V516H415V517H419V524H420V527ZM424 527V524H425V516H426V521H427V517H430V518H431V521H432V524H433V519H434V518H436V517H440V516H442V521H443V524H444V527ZM448 527V521H449V517H453V516H457V519H459V520H460V522H461V524H462V516H468V521H469V527ZM470 527V523H471V517H476V519H477V521H478V523H479V527ZM485 527V524H486V522H487V517H488V519H490V517H494V523H495V524H498V517H499V519H500V518H501V516H504V520H505V522H506V524H508V517H511V516H515V517H518V519H519V521H520V527ZM525 527V523H526V521H527V520H531V519H534V520H536V519H537V524H538V525H539V526H540V523H541V522H542V520H544V519H546V520H550V523H551V527ZM554 527V524H555V522H556V516H557V523H558V517H560V519H561V521H562V523H563V517H568V520H569V523H570V524H571V522H572V520H573V518H574V517H575V516H577V517H578V518H579V516H581V521H582V522H583V524H584V527ZM586 527V525H593V527ZM596 527V525H599V527ZM611 527V525H613V527ZM654 527V523H655V524H665V523H666V524H671V523H673V524H674V525H676V524H680V525H681V524H682V525H683V527ZM684 527V525H685V524H686V525H687V527Z" fill="#80ff00"/>
<rect x="264" y="64" width="5" height="1" fill="#000"/>
<rect x="264" y="109" width="5" height="1" fill="#000"/>
<rect x="264" y="154" width="5" height="1" fill="#000"/>
<rect x="264" y="200" width="5" height="1" fill="#000"/>
<rect x="264" y="245" width="5" height="1" fill="#000"/>
<rect x="264" y="290" width="5" height="1" fill="#000"/>
<rect x="264" y="335" width="5" height="1" fill="#000"/>
<rect x="264" y="381" width="5" height="1" fill="#000"/>
<rect x="264" y="426" width="5" height="1" fill="#000"/>
<rect x="264" y="471" width="5" height="1" fill="#000"/>
<rect x="264" y="516" width="5" height="1" fill="#000"/>
<rect x="264" y="527" width="5" height="1" fill="#000"/>
<rect x="271" y="530" width="1" height="5" fill="#000"/>
<rect x="322" y="530" width="1" height="5" fill="#000"/>
<rect x="373" y="530" width="1" height="5" fill="#000"/>
<rect x="424" y="530" width="1" height="5" fill="#000"/>
<rect x="475" y="530" width="1" height="5" fill="#000"/>
<rect x="526" y="530" width="1" height="5" fill="#000"/>
<rect x="577" y="530" width="1" height="5" fill="#000"/>
<rect x="628" y="530" width="1" height="5" fill="#000"/>
<rect x="679" y="530" width="1" height="5" fill="#000"/>
<rect x="730" y="530" width="1" height="5" fill="#000"/>
<rect x="781" y="530" width="1" height="5" fill="#000"/>
<rect x="832" y="530" width="1" height="5" fill="#000"/>
<rect x="882" y="530" width="1" height="5" fill="#000"/>
<rect x="885" y="530" width="1" height="5" fill="#000"/>
</svg>
<svg style="position:absolute;left:0;top:0" width="927" height="563" viewBox="0 0 927 563">
<polyline points="356.6,527.3 374.4,511.5 392.3,496.1 410.1,480.5 427.9,464.9 445.8,449.1 463.6,433.2 481.4,417.2 499.2,401.0 517.1,384.8 534.9,368.4 552.7,351.9 570.6,335.3 588.4,318.5" fill="none" stroke="#f05858" stroke-width="3.2" stroke-linejoin="round"/>
<line x1="559.8" y1="296.1" x2="723" y2="91" stroke="#0a32e6" stroke-width="3.2"/>
<rect x="741" y="68" width="5" height="5" fill="#f01010"/>
<rect x="737" y="79" width="5" height="5" fill="#f01010"/>
<rect x="720" y="90" width="5" height="5" fill="#f01010"/>
<rect x="705" y="102" width="5" height="5" fill="#f01010"/>
<rect x="707" y="113" width="5" height="5" fill="#f01010"/>
<rect x="685" y="124" width="5" height="5" fill="#f01010"/>
<rect x="672" y="135" width="5" height="5" fill="#f01010"/>
<rect x="676" y="147" width="5" height="5" fill="#f01010"/>
<rect x="662" y="158" width="5" height="5" fill="#f01010"/>
<rect x="659" y="169" width="5" height="5" fill="#f01010"/>
<rect x="646" y="180" width="5" height="5" fill="#f01010"/>
<rect x="654" y="192" width="5" height="5" fill="#f01010"/>
<rect x="645" y="203" width="5" height="5" fill="#f01010"/>
<rect x="614" y="214" width="5" height="5" fill="#f01010"/>
<rect x="611" y="226" width="5" height="5" fill="#f01010"/>
<rect x="605" y="237" width="5" height="5" fill="#f01010"/>
<rect x="592" y="248" width="5" height="5" fill="#f01010"/>
<rect x="586" y="260" width="5" height="5" fill="#f01010"/>
<rect x="574" y="271" width="5" height="5" fill="#f01010"/>
<rect x="557" y="282" width="5" height="5" fill="#f01010"/>
<rect x="552" y="294" width="5" height="5" fill="#f01010"/>
<rect x="572" y="304" width="5" height="5" fill="#f01010"/>
<rect x="586" y="316" width="5" height="5" fill="#f01010"/>
<rect x="568" y="327" width="5" height="5" fill="#f01010"/>
<rect x="551" y="339" width="5" height="5" fill="#f01010"/>
<rect x="551" y="350" width="5" height="5" fill="#f01010"/>
<rect x="552" y="361" width="5" height="5" fill="#f01010"/>
<rect x="528" y="372" width="5" height="5" fill="#f01010"/>
<rect x="511" y="384" width="5" height="5" fill="#f01010"/>
<rect x="507" y="395" width="5" height="5" fill="#f01010"/>
<rect x="493" y="406" width="5" height="5" fill="#f01010"/>
<rect x="482" y="418" width="5" height="5" fill="#f01010"/>
<rect x="470" y="429" width="5" height="5" fill="#f01010"/>
<rect x="452" y="440" width="5" height="5" fill="#f01010"/>
<rect x="429" y="452" width="5" height="5" fill="#f01010"/>
<rect x="418" y="462" width="5" height="5" fill="#f01010"/>
<rect x="412" y="474" width="5" height="5" fill="#f01010"/>
<rect x="395" y="485" width="5" height="5" fill="#f01010"/>
<rect x="378" y="496" width="5" height="5" fill="#f01010"/>
<rect x="376" y="508" width="5" height="5" fill="#f01010"/>
<rect x="361" y="519" width="5" height="5" fill="#f01010"/>
</svg>
<div class="t" style="right:665px;top:59px;font-size:12px;font-weight:normal;color:#000;text-align:right;letter-spacing:-0.6px;">8</div>
<div class="t" style="right:665px;top:104px;font-size:12px;font-weight:normal;color:#000;text-align:right;letter-spacing:-0.6px;">12</div>
<div class="t" style="right:665px;top:149px;font-size:12px;font-weight:normal;color:#000;text-align:right;letter-spacing:-0.6px;">16</div>
<div class="t" style="right:665px;top:195px;font-size:12px;font-weight:normal;color:#000;text-align:right;letter-spacing:-0.6px;">20</div>
<div class="t" style="right:665px;top:240px;font-size:12px;font-weight:normal;color:#000;text-align:right;letter-spacing:-0.6px;">24</div>
<div class="t" style="right:665px;top:285px;font-size:12px;font-weight:normal;color:#000;text-align:right;letter-spacing:-0.6px;">28</div>
<div class="t" style="right:665px;top:330px;font-size:12px;font-weight:normal;color:#000;text-align:right;letter-spacing:-0.6px;">32</div>
<div class="t" style="right:665px;top:376px;font-size:12px;font-weight:normal;color:#000;text-align:right;letter-spacing:-0.6px;">36</div>
<div class="t" style="right:665px;top:421px;font-size:12px;font-weight:normal;color:#000;text-align:right;letter-spacing:-0.6px;">40</div>
<div class="t" style="right:665px;top:466px;font-size:12px;font-weight:normal;color:#000;text-align:right;letter-spacing:-0.6px;">44</div>
<div class="t" style="right:665px;top:523px;font-size:12px;font-weight:normal;color:#000;text-align:right;letter-spacing:-0.6px;">49</div>
<div class="t" style="left:171px;width:200px;top:537px;font-size:12px;font-weight:normal;color:#000;text-align:center;letter-spacing:-0.6px;">0</div>
<div class="t" style="left:222px;width:200px;top:537px;font-size:12px;font-weight:normal;color:#000;text-align:center;letter-spacing:-0.6px;">2</div>
<div class="t" style="left:273px;width:200px;top:537px;font-size:12px;font-weight:normal;color:#000;text-align:center;letter-spacing:-0.6px;">4</div>
<div class="t" style="left:324px;width:200px;top:537px;font-size:12px;font-weight:normal;color:#000;text-align:center;letter-spacing:-0.6px;">6</div>
<div class="t" style="left:375px;width:200px;top:537px;font-size:12px;font-weight:normal;color:#000;text-align:center;letter-spacing:-0.6px;">8</div>
<div class="t" style="left:426px;width:200px;top:537px;font-size:12px;font-weight:normal;color:#000;text-align:center;letter-spacing:-0.6px;">10</div>
<div class="t" style="left:477px;width:200px;top:537px;font-size:12px;font-weight:normal;color:#000;text-align:center;letter-spacing:-0.6px;">12</div>
<div class="t" style="left:528px;width:200px;top:537px;font-size:12px;font-weight:normal;color:#000;text-align:center;letter-spacing:-0.6px;">14</div>
<div class="t" style="left:579px;width:200px;top:537px;font-size:12px;font-weight:normal;color:#000;text-align:center;letter-spacing:-0.6px;">16</div>
<div class="t" style="left:630px;width:200px;top:537px;font-size:12px;font-weight:normal;color:#000;text-align:center;letter-spacing:-0.6px;">18</div>
<div class="t" style="left:681px;width:200px;top:537px;font-size:12px;font-weight:normal;color:#000;text-align:center;letter-spacing:-0.6px;">20</div>
<div class="t" style="left:732px;width:200px;top:537px;font-size:12px;font-weight:normal;color:#000;text-align:center;letter-spacing:-0.6px;">22</div>
<div class="t" style="left:784px;width:200px;top:537px;font-size:12px;font-weight:normal;color:#000;text-align:center;letter-spacing:-0.6px;">24.1</div>
</body></html>
